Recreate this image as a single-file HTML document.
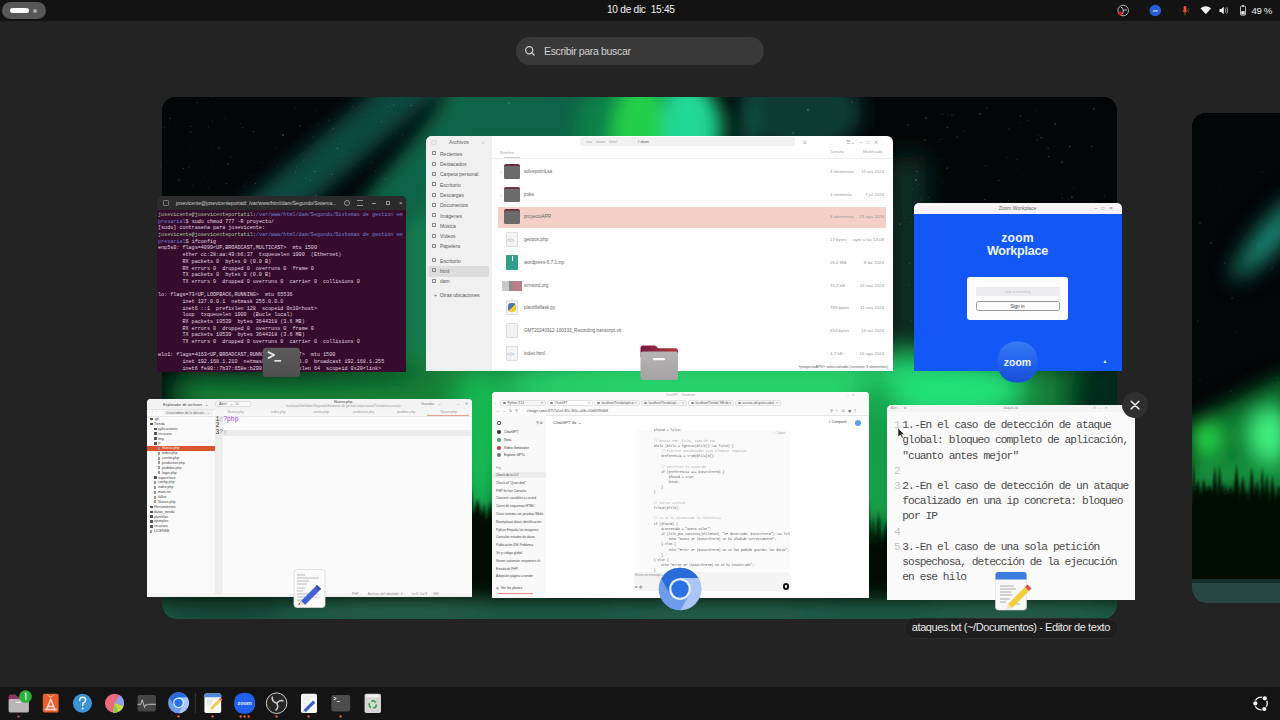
<!DOCTYPE html>
<html><head><meta charset="utf-8">
<style>
*{margin:0;padding:0;box-sizing:border-box}
html,body{width:1280px;height:720px;overflow:hidden;background:#232323;font-family:"Liberation Sans",sans-serif;position:relative}
.a{position:absolute}
#top{left:0;top:0;width:1280px;height:21px;background:#131313}
#dock{left:0;top:687px;width:1280px;height:33px;background:#141414}
.ws{overflow:hidden;border-radius:14px;background:#040806}
.win{overflow:hidden;background:#fafafa}
.mono{font-family:"Liberation Mono",monospace}
</style></head><body>
<!-- top bar -->
<div id="top" class="a">
  <div class="a" style="left:2px;top:2px;width:43.5px;height:17px;border-radius:9px;background:#575757"></div>
  <div class="a" style="left:10px;top:8px;width:19px;height:5px;border-radius:3px;background:#fafafa"></div>
  <div class="a" style="left:33px;top:9px;width:4px;height:4px;border-radius:2px;background:#a8a8a8"></div>
  <div class="a" style="left:607px;top:3.5px;font-size:10.2px;color:#f0f0f0;letter-spacing:-0.3px;white-space:nowrap">10 de dic&nbsp;&nbsp;15:45</div>
</div>
<!-- search -->
<div class="a" style="left:516px;top:37px;width:248px;height:28px;border-radius:14px;background:#393939"></div>
<div class="a" style="left:544px;top:45px;font-size:10.6px;color:#cfcfcf;letter-spacing:-0.38px;white-space:nowrap">Escribir para buscar</div>
<svg class="a" style="left:524px;top:45px" width="12" height="12" viewBox="0 0 12 12"><circle cx="5.2" cy="5.2" r="3.6" fill="none" stroke="#d0d0d0" stroke-width="1.2"/><path d="M7.8 7.8 L10 10" stroke="#d0d0d0" stroke-width="1.3" stroke-linecap="round"/></svg>

<!-- workspace 2 -->
<div id="ws2" class="a ws" style="left:1191.5px;top:112.5px;width:400px;height:490px"><svg class="a" style="left:0;top:0" width="100" height="490" viewBox="0 0 100 490">
<defs><filter id="w2b" filterUnits="userSpaceOnUse" x="-100" y="-100" width="300" height="700"><feGaussianBlur stdDeviation="10"/></filter>
<filter id="w2c" filterUnits="userSpaceOnUse" x="-100" y="-100" width="300" height="700"><feGaussianBlur stdDeviation="1.2"/></filter></defs>
<rect width="100" height="490" fill="#030607"/>
<g filter="url(#w2b)">
<ellipse cx="78" cy="122" rx="14" ry="58" fill="#136a5a" transform="rotate(40 78 122)"/>
<ellipse cx="80" cy="128" rx="9" ry="32" fill="#1b8c78" transform="rotate(40 80 128)"/>
<polygon points="0,310 100,260 100,380 0,380" fill="#0a7a30"/>
<ellipse cx="12" cy="325" rx="16" ry="16" fill="#28d848"/>
<ellipse cx="78" cy="322" rx="20" ry="26" fill="#40f080"/>
<rect x="-10" y="350" width="120" height="30" fill="#14903c"/>
</g>
<circle cx="40" cy="185" r="0.58" fill="#9aaaa8" opacity="0.53"/><circle cx="45" cy="194" r="0.36" fill="#9aaaa8" opacity="0.56"/><circle cx="55" cy="262" r="0.33" fill="#9aaaa8" opacity="0.45"/><circle cx="8" cy="267" r="0.51" fill="#9aaaa8" opacity="0.32"/><circle cx="86" cy="318" r="0.50" fill="#9aaaa8" opacity="0.61"/><circle cx="14" cy="5" r="0.46" fill="#9aaaa8" opacity="0.33"/><circle cx="17" cy="80" r="0.31" fill="#9aaaa8" opacity="0.53"/><circle cx="39" cy="278" r="0.46" fill="#9aaaa8" opacity="0.62"/><circle cx="44" cy="219" r="0.44" fill="#9aaaa8" opacity="0.44"/><circle cx="88" cy="329" r="0.55" fill="#9aaaa8" opacity="0.65"/><circle cx="28" cy="76" r="0.39" fill="#9aaaa8" opacity="0.34"/><circle cx="67" cy="132" r="0.55" fill="#9aaaa8" opacity="0.49"/><circle cx="84" cy="280" r="0.30" fill="#9aaaa8" opacity="0.40"/><circle cx="80" cy="155" r="0.59" fill="#9aaaa8" opacity="0.50"/><circle cx="6" cy="208" r="0.53" fill="#9aaaa8" opacity="0.43"/><circle cx="8" cy="110" r="0.59" fill="#9aaaa8" opacity="0.68"/><circle cx="10" cy="81" r="0.33" fill="#9aaaa8" opacity="0.33"/><circle cx="70" cy="59" r="0.47" fill="#9aaaa8" opacity="0.52"/><circle cx="17" cy="242" r="0.34" fill="#9aaaa8" opacity="0.62"/><circle cx="10" cy="139" r="0.36" fill="#9aaaa8" opacity="0.43"/><circle cx="85" cy="265" r="0.39" fill="#9aaaa8" opacity="0.74"/><circle cx="19" cy="130" r="0.56" fill="#9aaaa8" opacity="0.62"/><circle cx="9" cy="326" r="0.36" fill="#9aaaa8" opacity="0.43"/><circle cx="68" cy="109" r="0.39" fill="#9aaaa8" opacity="0.34"/><circle cx="8" cy="192" r="0.37" fill="#9aaaa8" opacity="0.60"/><circle cx="33" cy="150" r="0.59" fill="#9aaaa8" opacity="0.54"/><circle cx="51" cy="286" r="0.35" fill="#9aaaa8" opacity="0.38"/><circle cx="80" cy="270" r="0.37" fill="#9aaaa8" opacity="0.39"/><circle cx="65" cy="310" r="0.36" fill="#9aaaa8" opacity="0.78"/><circle cx="78" cy="199" r="0.43" fill="#9aaaa8" opacity="0.35"/>
<g filter="url(#w2c)"><polygon points="0.0,491.0 0.0,390.0 1.6,347.9 3.2,379.4 6.1,365.9 9.0,385.6 11.7,365.6 14.4,379.7 17.3,371.7 20.2,380.7 22.9,352.7 25.5,385.2 27.5,351.6 29.6,381.6 31.1,368.2 32.7,384.4 34.3,370.9 35.9,384.0 38.6,372.3 41.2,384.2 44.5,351.6 47.8,387.7 50.6,362.2 53.5,383.2 55.1,376.9 56.7,391.5 59.6,353.6 62.5,382.9 65.2,366.2 68.0,390.6 70.2,353.8 72.3,384.6 74.9,360.8 77.5,393.2 80.4,362.2 83.4,392.7 86.8,371.5 90.1,392.2 93.4,359.2 96.7,390.2 99.8,360.1 102.8,392.4 100.0,380.0 100.0,491.0" fill="#030904"/></g>
<rect x="0" y="468" width="100" height="25" fill="#284741"/>
<rect x="0" y="466" width="100" height="4" fill="#15302b"/>
</svg></div>
<!-- main workspace -->
<div id="ws1" class="a ws" style="left:162px;top:97px;width:955px;height:522px"><svg class="a" style="left:0;top:0" width="955" height="522" viewBox="0 0 955 522">
<defs>
<filter id="bl" filterUnits="userSpaceOnUse" x="-100" y="-100" width="1155" height="722"><feGaussianBlur stdDeviation="13"/></filter>
<filter id="bl2" filterUnits="userSpaceOnUse" x="-100" y="-100" width="1155" height="722"><feGaussianBlur stdDeviation="1.5"/></filter>
<filter id="bl3" filterUnits="userSpaceOnUse" x="-100" y="-100" width="1155" height="722"><feGaussianBlur stdDeviation="9"/></filter>
</defs>
<rect width="955" height="522" fill="#030607"/>
<g filter="url(#bl)">



<rect x="290" y="-20" width="80" height="70" fill="#128050"/>
<rect x="378" y="-20" width="60" height="70" fill="#0a5030"/>
<rect x="230" y="100" width="60" height="200" fill="#127a50"/>
<rect x="728" y="60" width="35" height="230" fill="#0a3026"/>
<ellipse cx="500" cy="298" rx="520" ry="48" fill="#128238"/>
<ellipse cx="120" cy="276" rx="150" ry="10" fill="#06251a"/>
<ellipse cx="590" cy="290" rx="250" ry="34" fill="#26d06a"/>
<ellipse cx="790" cy="292" rx="70" ry="32" fill="#24e078"/>
<ellipse cx="990" cy="300" rx="90" ry="45" fill="#062a1c"/>
<ellipse cx="-10" cy="290" rx="30" ry="40" fill="#040a08"/>
<ellipse cx="318" cy="350" rx="30" ry="80" fill="#17b853"/>
<ellipse cx="715" cy="390" rx="32" ry="110" fill="#13a04a"/>
<rect x="-50" y="430" width="1100" height="120" fill="#040806"/>
</g>
<g filter="url(#bl3)">
<polygon points="68,118 135,118 290,-15 222,-15" fill="#0c4a40"/>
<polygon points="188,118 440,118 440,-15 298,-15" fill="#0d6446"/>
<polygon points="260,115 440,115 440,50 310,50" fill="#12834f"/>
<ellipse cx="490" cy="30" rx="75" ry="55" fill="#10804a"/>
<ellipse cx="640" cy="15" rx="60" ry="40" fill="#0a3a30"/>
<ellipse cx="478" cy="40" rx="28" ry="55" fill="#22d048"/>
<ellipse cx="527" cy="35" rx="26" ry="55" fill="#20d898"/>
<ellipse cx="586" cy="25" rx="7" ry="40" fill="#0e5a48"/>
</g>
<circle cx="69" cy="134" r="0.50" fill="#9aaaa8" opacity="0.38"/><circle cx="485" cy="9" r="0.52" fill="#9aaaa8" opacity="0.38"/><circle cx="87" cy="106" r="0.68" fill="#9aaaa8" opacity="0.41"/><circle cx="213" cy="157" r="0.58" fill="#9aaaa8" opacity="0.55"/><circle cx="932" cy="12" r="0.69" fill="#9aaaa8" opacity="0.49"/><circle cx="138" cy="29" r="0.47" fill="#9aaaa8" opacity="0.76"/><circle cx="57" cy="51" r="0.62" fill="#9aaaa8" opacity="0.56"/><circle cx="836" cy="182" r="0.47" fill="#9aaaa8" opacity="0.84"/><circle cx="113" cy="105" r="0.65" fill="#9aaaa8" opacity="0.43"/><circle cx="467" cy="10" r="0.62" fill="#9aaaa8" opacity="0.73"/><circle cx="436" cy="210" r="0.54" fill="#9aaaa8" opacity="0.68"/><circle cx="58" cy="175" r="0.61" fill="#9aaaa8" opacity="0.85"/><circle cx="785" cy="71" r="0.50" fill="#9aaaa8" opacity="0.68"/><circle cx="22" cy="115" r="0.42" fill="#9aaaa8" opacity="0.41"/><circle cx="56" cy="192" r="0.40" fill="#9aaaa8" opacity="0.47"/><circle cx="429" cy="137" r="0.68" fill="#9aaaa8" opacity="0.78"/><circle cx="844" cy="239" r="0.41" fill="#9aaaa8" opacity="0.44"/><circle cx="910" cy="173" r="0.56" fill="#9aaaa8" opacity="0.66"/><circle cx="646" cy="13" r="0.71" fill="#9aaaa8" opacity="0.74"/><circle cx="835" cy="199" r="0.51" fill="#9aaaa8" opacity="0.55"/><circle cx="99" cy="159" r="0.37" fill="#9aaaa8" opacity="0.38"/><circle cx="50" cy="0" r="0.41" fill="#9aaaa8" opacity="0.40"/><circle cx="347" cy="6" r="0.70" fill="#9aaaa8" opacity="0.66"/><circle cx="142" cy="63" r="0.49" fill="#9aaaa8" opacity="0.53"/><circle cx="117" cy="212" r="0.75" fill="#9aaaa8" opacity="0.58"/><circle cx="327" cy="66" r="0.41" fill="#9aaaa8" opacity="0.36"/><circle cx="908" cy="132" r="0.41" fill="#9aaaa8" opacity="0.62"/><circle cx="26" cy="132" r="0.74" fill="#9aaaa8" opacity="0.78"/><circle cx="160" cy="193" r="0.56" fill="#9aaaa8" opacity="0.74"/><circle cx="315" cy="56" r="0.74" fill="#9aaaa8" opacity="0.78"/><circle cx="770" cy="205" r="0.65" fill="#9aaaa8" opacity="0.46"/><circle cx="27" cy="70" r="0.45" fill="#9aaaa8" opacity="0.70"/><circle cx="913" cy="112" r="0.72" fill="#9aaaa8" opacity="0.84"/><circle cx="912" cy="91" r="0.44" fill="#9aaaa8" opacity="0.46"/><circle cx="860" cy="210" r="0.54" fill="#9aaaa8" opacity="0.68"/><circle cx="764" cy="21" r="0.61" fill="#9aaaa8" opacity="0.80"/><circle cx="747" cy="188" r="0.54" fill="#9aaaa8" opacity="0.44"/><circle cx="754" cy="83" r="0.67" fill="#9aaaa8" opacity="0.84"/><circle cx="378" cy="100" r="0.64" fill="#9aaaa8" opacity="0.44"/><circle cx="121" cy="38" r="0.71" fill="#9aaaa8" opacity="0.75"/><circle cx="140" cy="207" r="0.74" fill="#9aaaa8" opacity="0.68"/><circle cx="14" cy="243" r="0.61" fill="#9aaaa8" opacity="0.61"/><circle cx="892" cy="108" r="0.70" fill="#9aaaa8" opacity="0.76"/><circle cx="400" cy="33" r="0.49" fill="#9aaaa8" opacity="0.58"/><circle cx="876" cy="125" r="0.56" fill="#9aaaa8" opacity="0.61"/><circle cx="18" cy="110" r="0.42" fill="#9aaaa8" opacity="0.35"/><circle cx="763" cy="43" r="0.54" fill="#9aaaa8" opacity="0.71"/><circle cx="738" cy="127" r="0.57" fill="#9aaaa8" opacity="0.73"/><circle cx="871" cy="111" r="0.60" fill="#9aaaa8" opacity="0.60"/><circle cx="509" cy="120" r="0.63" fill="#9aaaa8" opacity="0.79"/><circle cx="900" cy="65" r="0.57" fill="#9aaaa8" opacity="0.82"/><circle cx="802" cy="34" r="0.40" fill="#9aaaa8" opacity="0.57"/><circle cx="69" cy="60" r="0.38" fill="#9aaaa8" opacity="0.68"/><circle cx="749" cy="224" r="0.41" fill="#9aaaa8" opacity="0.71"/><circle cx="631" cy="36" r="0.74" fill="#9aaaa8" opacity="0.46"/><circle cx="910" cy="100" r="0.54" fill="#9aaaa8" opacity="0.84"/><circle cx="795" cy="40" r="0.52" fill="#9aaaa8" opacity="0.61"/><circle cx="690" cy="5" r="0.57" fill="#9aaaa8" opacity="0.57"/><circle cx="17" cy="83" r="0.60" fill="#9aaaa8" opacity="0.61"/><circle cx="61" cy="246" r="0.67" fill="#9aaaa8" opacity="0.84"/><circle cx="100" cy="66" r="0.37" fill="#9aaaa8" opacity="0.74"/><circle cx="870" cy="205" r="0.45" fill="#9aaaa8" opacity="0.42"/><circle cx="878" cy="143" r="0.63" fill="#9aaaa8" opacity="0.39"/><circle cx="55" cy="172" r="0.52" fill="#9aaaa8" opacity="0.39"/><circle cx="896" cy="159" r="0.67" fill="#9aaaa8" opacity="0.39"/><circle cx="818" cy="17" r="0.70" fill="#9aaaa8" opacity="0.58"/><circle cx="324" cy="138" r="0.46" fill="#9aaaa8" opacity="0.41"/><circle cx="154" cy="13" r="0.43" fill="#9aaaa8" opacity="0.51"/><circle cx="17" cy="63" r="0.36" fill="#9aaaa8" opacity="0.72"/><circle cx="893" cy="27" r="0.68" fill="#9aaaa8" opacity="0.57"/><circle cx="484" cy="172" r="0.49" fill="#9aaaa8" opacity="0.77"/><circle cx="332" cy="14" r="0.40" fill="#9aaaa8" opacity="0.39"/><circle cx="81" cy="210" r="0.70" fill="#9aaaa8" opacity="0.69"/>
<circle cx="775.5" cy="141.1" r="0.49" fill="#8fa0a0" opacity="0.47"/><circle cx="786.4" cy="160.6" r="0.54" fill="#8fa0a0" opacity="0.48"/><circle cx="848.6" cy="54.9" r="0.30" fill="#8fa0a0" opacity="0.42"/><circle cx="865.9" cy="23.2" r="0.54" fill="#8fa0a0" opacity="0.35"/><circle cx="790.0" cy="18.0" r="0.60" fill="#8fa0a0" opacity="0.58"/><circle cx="928.1" cy="127.0" r="0.31" fill="#8fa0a0" opacity="0.40"/><circle cx="847.0" cy="32.0" r="0.59" fill="#8fa0a0" opacity="0.42"/><circle cx="773.3" cy="165.3" r="0.34" fill="#8fa0a0" opacity="0.67"/><circle cx="837.4" cy="114.9" r="0.40" fill="#8fa0a0" opacity="0.47"/><circle cx="780.2" cy="17.1" r="0.56" fill="#8fa0a0" opacity="0.36"/><circle cx="907.8" cy="49.6" r="0.59" fill="#8fa0a0" opacity="0.65"/><circle cx="902.3" cy="154.9" r="0.47" fill="#8fa0a0" opacity="0.58"/><circle cx="766.3" cy="100.5" r="0.55" fill="#8fa0a0" opacity="0.34"/><circle cx="938.5" cy="178.6" r="0.42" fill="#8fa0a0" opacity="0.41"/><circle cx="837.0" cy="83.3" r="0.60" fill="#8fa0a0" opacity="0.42"/><circle cx="745.8" cy="27.7" r="0.52" fill="#8fa0a0" opacity="0.70"/><circle cx="846.6" cy="103.4" r="0.47" fill="#8fa0a0" opacity="0.59"/><circle cx="787.7" cy="125.7" r="0.47" fill="#8fa0a0" opacity="0.53"/><circle cx="778.8" cy="42.3" r="0.40" fill="#8fa0a0" opacity="0.67"/><circle cx="814.5" cy="123.5" r="0.39" fill="#8fa0a0" opacity="0.30"/><circle cx="754.1" cy="164.6" r="0.53" fill="#8fa0a0" opacity="0.42"/><circle cx="886.9" cy="138.4" r="0.57" fill="#8fa0a0" opacity="0.68"/><circle cx="827.5" cy="197.9" r="0.59" fill="#8fa0a0" opacity="0.52"/><circle cx="929.9" cy="103.3" r="0.41" fill="#8fa0a0" opacity="0.36"/><circle cx="928.4" cy="40.8" r="0.32" fill="#8fa0a0" opacity="0.61"/><circle cx="906.4" cy="101.8" r="0.55" fill="#8fa0a0" opacity="0.27"/><circle cx="795.5" cy="65.1" r="0.43" fill="#8fa0a0" opacity="0.33"/><circle cx="754.9" cy="74.2" r="0.57" fill="#8fa0a0" opacity="0.69"/><circle cx="900.4" cy="101.0" r="0.38" fill="#8fa0a0" opacity="0.68"/><circle cx="853.0" cy="148.4" r="0.31" fill="#8fa0a0" opacity="0.35"/><circle cx="920.2" cy="161.1" r="0.56" fill="#8fa0a0" opacity="0.52"/><circle cx="831.6" cy="120.4" r="0.55" fill="#8fa0a0" opacity="0.39"/><circle cx="854.9" cy="62.4" r="0.53" fill="#8fa0a0" opacity="0.25"/><circle cx="887.3" cy="191.3" r="0.31" fill="#8fa0a0" opacity="0.52"/><circle cx="878.4" cy="171.8" r="0.48" fill="#8fa0a0" opacity="0.37"/><circle cx="827.2" cy="192.2" r="0.57" fill="#8fa0a0" opacity="0.31"/><circle cx="760.4" cy="27.8" r="0.31" fill="#8fa0a0" opacity="0.45"/><circle cx="770.3" cy="174.8" r="0.50" fill="#8fa0a0" opacity="0.31"/><circle cx="855.8" cy="71.6" r="0.45" fill="#8fa0a0" opacity="0.35"/><circle cx="775.7" cy="44.9" r="0.41" fill="#8fa0a0" opacity="0.57"/><circle cx="858.3" cy="18.8" r="0.51" fill="#8fa0a0" opacity="0.64"/><circle cx="906.5" cy="160.2" r="0.30" fill="#8fa0a0" opacity="0.46"/><circle cx="753.7" cy="155.1" r="0.35" fill="#8fa0a0" opacity="0.57"/><circle cx="794.4" cy="142.4" r="0.39" fill="#8fa0a0" opacity="0.27"/><circle cx="823.6" cy="68.8" r="0.57" fill="#8fa0a0" opacity="0.38"/><circle cx="848.2" cy="114.4" r="0.58" fill="#8fa0a0" opacity="0.29"/><circle cx="869.3" cy="106.6" r="0.52" fill="#8fa0a0" opacity="0.69"/><circle cx="806.7" cy="142.9" r="0.46" fill="#8fa0a0" opacity="0.50"/><circle cx="753.7" cy="164.8" r="0.59" fill="#8fa0a0" opacity="0.41"/><circle cx="808.4" cy="198.7" r="0.33" fill="#8fa0a0" opacity="0.28"/><circle cx="755.8" cy="164.7" r="0.53" fill="#8fa0a0" opacity="0.45"/><circle cx="873.6" cy="13.8" r="0.49" fill="#8fa0a0" opacity="0.45"/><circle cx="851.2" cy="84.0" r="0.42" fill="#8fa0a0" opacity="0.35"/><circle cx="750.5" cy="92.4" r="0.37" fill="#8fa0a0" opacity="0.57"/><circle cx="915.7" cy="147.5" r="0.44" fill="#8fa0a0" opacity="0.36"/><circle cx="822.9" cy="102.5" r="0.49" fill="#8fa0a0" opacity="0.68"/><circle cx="758.4" cy="101.1" r="0.45" fill="#8fa0a0" opacity="0.57"/><circle cx="931.5" cy="158.1" r="0.49" fill="#8fa0a0" opacity="0.59"/><circle cx="883.6" cy="173.2" r="0.51" fill="#8fa0a0" opacity="0.56"/><circle cx="792.7" cy="184.2" r="0.42" fill="#8fa0a0" opacity="0.53"/><circle cx="917.3" cy="193.1" r="0.60" fill="#8fa0a0" opacity="0.25"/><circle cx="807.2" cy="69.2" r="0.42" fill="#8fa0a0" opacity="0.32"/><circle cx="858.9" cy="25.1" r="0.39" fill="#8fa0a0" opacity="0.67"/><circle cx="899.6" cy="97.8" r="0.33" fill="#8fa0a0" opacity="0.68"/><circle cx="891.3" cy="49.1" r="0.40" fill="#8fa0a0" opacity="0.54"/><circle cx="886.6" cy="59.6" r="0.59" fill="#8fa0a0" opacity="0.39"/><circle cx="794.7" cy="170.6" r="0.35" fill="#8fa0a0" opacity="0.56"/><circle cx="783.0" cy="123.6" r="0.38" fill="#8fa0a0" opacity="0.42"/><circle cx="942.3" cy="98.7" r="0.43" fill="#8fa0a0" opacity="0.53"/><circle cx="800.3" cy="43.1" r="0.42" fill="#8fa0a0" opacity="0.37"/><circle cx="780.5" cy="192.5" r="0.31" fill="#8fa0a0" opacity="0.61"/><circle cx="941.0" cy="143.9" r="0.31" fill="#8fa0a0" opacity="0.48"/><circle cx="748.4" cy="125.5" r="0.51" fill="#8fa0a0" opacity="0.36"/><circle cx="741.6" cy="113.4" r="0.33" fill="#8fa0a0" opacity="0.39"/><circle cx="837.6" cy="179.9" r="0.41" fill="#8fa0a0" opacity="0.31"/><circle cx="910.2" cy="166.2" r="0.46" fill="#8fa0a0" opacity="0.27"/><circle cx="780.3" cy="86.6" r="0.47" fill="#8fa0a0" opacity="0.35"/><circle cx="912.5" cy="170.3" r="0.58" fill="#8fa0a0" opacity="0.65"/><circle cx="743.8" cy="120.6" r="0.32" fill="#8fa0a0" opacity="0.65"/><circle cx="900.6" cy="154.3" r="0.36" fill="#8fa0a0" opacity="0.28"/><circle cx="915.3" cy="125.2" r="0.49" fill="#8fa0a0" opacity="0.46"/><circle cx="912.0" cy="74.2" r="0.38" fill="#8fa0a0" opacity="0.41"/><circle cx="804.1" cy="129.2" r="0.57" fill="#8fa0a0" opacity="0.28"/><circle cx="754.5" cy="107.2" r="0.50" fill="#8fa0a0" opacity="0.34"/><circle cx="798.0" cy="21.2" r="0.31" fill="#8fa0a0" opacity="0.47"/><circle cx="886.4" cy="134.1" r="0.35" fill="#8fa0a0" opacity="0.30"/><circle cx="940.1" cy="112.3" r="0.42" fill="#8fa0a0" opacity="0.56"/><circle cx="896.5" cy="109.7" r="0.32" fill="#8fa0a0" opacity="0.62"/><circle cx="785.9" cy="17.7" r="0.41" fill="#8fa0a0" opacity="0.49"/><circle cx="875.1" cy="43.1" r="0.51" fill="#8fa0a0" opacity="0.47"/><circle cx="774.8" cy="171.7" r="0.54" fill="#8fa0a0" opacity="0.66"/><circle cx="886.1" cy="51.3" r="0.53" fill="#8fa0a0" opacity="0.66"/><circle cx="854.6" cy="182.6" r="0.59" fill="#8fa0a0" opacity="0.43"/><circle cx="942.5" cy="188.0" r="0.54" fill="#8fa0a0" opacity="0.26"/><circle cx="815.7" cy="126.6" r="0.48" fill="#8fa0a0" opacity="0.59"/><circle cx="879.1" cy="40.7" r="0.58" fill="#8fa0a0" opacity="0.49"/><circle cx="929.6" cy="49.3" r="0.60" fill="#8fa0a0" opacity="0.50"/><circle cx="906.7" cy="150.6" r="0.56" fill="#8fa0a0" opacity="0.41"/><circle cx="757.8" cy="87.1" r="0.35" fill="#8fa0a0" opacity="0.49"/><circle cx="915.2" cy="78.8" r="0.34" fill="#8fa0a0" opacity="0.26"/><circle cx="830.9" cy="120.3" r="0.31" fill="#8fa0a0" opacity="0.55"/><circle cx="785.3" cy="30.3" r="0.58" fill="#8fa0a0" opacity="0.49"/><circle cx="932.4" cy="107.6" r="0.34" fill="#8fa0a0" opacity="0.36"/><circle cx="831.2" cy="131.8" r="0.53" fill="#8fa0a0" opacity="0.59"/><circle cx="879.9" cy="58.1" r="0.43" fill="#8fa0a0" opacity="0.42"/><circle cx="845.3" cy="60.4" r="0.46" fill="#8fa0a0" opacity="0.46"/><circle cx="747.6" cy="166.4" r="0.48" fill="#8fa0a0" opacity="0.61"/><circle cx="898.4" cy="148.9" r="0.60" fill="#8fa0a0" opacity="0.42"/><circle cx="824.6" cy="10.7" r="0.50" fill="#8fa0a0" opacity="0.51"/><circle cx="863.9" cy="199.6" r="0.36" fill="#8fa0a0" opacity="0.35"/><circle cx="897.8" cy="164.4" r="0.44" fill="#8fa0a0" opacity="0.27"/><circle cx="819.6" cy="167.0" r="0.45" fill="#8fa0a0" opacity="0.46"/><circle cx="823.7" cy="129.4" r="0.48" fill="#8fa0a0" opacity="0.56"/><circle cx="926.0" cy="152.7" r="0.41" fill="#8fa0a0" opacity="0.36"/><circle cx="908.1" cy="160.7" r="0.58" fill="#8fa0a0" opacity="0.34"/><circle cx="922.3" cy="179.2" r="0.32" fill="#8fa0a0" opacity="0.39"/><circle cx="876.2" cy="37.8" r="0.55" fill="#8fa0a0" opacity="0.37"/><circle cx="886.7" cy="66.2" r="0.37" fill="#8fa0a0" opacity="0.34"/><circle cx="847.0" cy="145.5" r="0.37" fill="#8fa0a0" opacity="0.56"/><circle cx="812.0" cy="133.4" r="0.41" fill="#8fa0a0" opacity="0.34"/><circle cx="35.3" cy="5.8" r="0.51" fill="#8fa0a0" opacity="0.44"/><circle cx="30.8" cy="88.1" r="0.50" fill="#8fa0a0" opacity="0.26"/><circle cx="181.2" cy="59.5" r="0.43" fill="#8fa0a0" opacity="0.48"/><circle cx="240.6" cy="37.4" r="0.49" fill="#8fa0a0" opacity="0.54"/><circle cx="91.4" cy="34.6" r="0.53" fill="#8fa0a0" opacity="0.54"/><circle cx="114.2" cy="51.4" r="0.37" fill="#8fa0a0" opacity="0.61"/><circle cx="5.0" cy="64.3" r="0.44" fill="#8fa0a0" opacity="0.35"/><circle cx="146.7" cy="58.3" r="0.33" fill="#8fa0a0" opacity="0.47"/><circle cx="41.3" cy="79.9" r="0.40" fill="#8fa0a0" opacity="0.40"/><circle cx="53.8" cy="4.8" r="0.36" fill="#8fa0a0" opacity="0.32"/><circle cx="156.0" cy="84.7" r="0.37" fill="#8fa0a0" opacity="0.30"/><circle cx="133.6" cy="11.6" r="0.42" fill="#8fa0a0" opacity="0.59"/><circle cx="50.8" cy="70.0" r="0.46" fill="#8fa0a0" opacity="0.29"/><circle cx="60.6" cy="59.9" r="0.33" fill="#8fa0a0" opacity="0.34"/><circle cx="144.2" cy="81.8" r="0.46" fill="#8fa0a0" opacity="0.55"/><circle cx="2.3" cy="30.3" r="0.40" fill="#8fa0a0" opacity="0.66"/><circle cx="89.4" cy="78.5" r="0.31" fill="#8fa0a0" opacity="0.47"/><circle cx="222.9" cy="77.1" r="0.47" fill="#8fa0a0" opacity="0.33"/><circle cx="231.6" cy="8.0" r="0.59" fill="#8fa0a0" opacity="0.60"/><circle cx="179.9" cy="53.1" r="0.35" fill="#8fa0a0" opacity="0.40"/><circle cx="166.0" cy="65.6" r="0.42" fill="#8fa0a0" opacity="0.61"/><circle cx="13.4" cy="28.7" r="0.33" fill="#8fa0a0" opacity="0.40"/><circle cx="198.2" cy="75.3" r="0.34" fill="#8fa0a0" opacity="0.39"/><circle cx="28.0" cy="66.2" r="0.43" fill="#8fa0a0" opacity="0.35"/><circle cx="93.5" cy="86.5" r="0.43" fill="#8fa0a0" opacity="0.56"/><circle cx="156.9" cy="47.4" r="0.47" fill="#8fa0a0" opacity="0.41"/><circle cx="49.6" cy="49.4" r="0.39" fill="#8fa0a0" opacity="0.40"/><circle cx="46.6" cy="91.3" r="0.43" fill="#8fa0a0" opacity="0.34"/><circle cx="7.9" cy="21.4" r="0.56" fill="#8fa0a0" opacity="0.40"/><circle cx="166.8" cy="23.1" r="0.50" fill="#8fa0a0" opacity="0.45"/><circle cx="184.1" cy="52.8" r="0.41" fill="#8fa0a0" opacity="0.38"/><circle cx="148.6" cy="83.2" r="0.51" fill="#8fa0a0" opacity="0.47"/><circle cx="82.1" cy="89.1" r="0.55" fill="#8fa0a0" opacity="0.32"/><circle cx="169.8" cy="77.2" r="0.50" fill="#8fa0a0" opacity="0.68"/><circle cx="219.8" cy="24.6" r="0.60" fill="#8fa0a0" opacity="0.40"/><circle cx="95.0" cy="97.6" r="0.35" fill="#8fa0a0" opacity="0.43"/><circle cx="156.5" cy="27.3" r="0.38" fill="#8fa0a0" opacity="0.61"/><circle cx="153.1" cy="74.4" r="0.54" fill="#8fa0a0" opacity="0.64"/><circle cx="223.4" cy="82.3" r="0.59" fill="#8fa0a0" opacity="0.47"/><circle cx="175.4" cy="51.4" r="0.59" fill="#8fa0a0" opacity="0.54"/><circle cx="107.6" cy="66.4" r="0.39" fill="#8fa0a0" opacity="0.31"/><circle cx="96.6" cy="13.7" r="0.30" fill="#8fa0a0" opacity="0.29"/><circle cx="113.6" cy="76.3" r="0.31" fill="#8fa0a0" opacity="0.54"/><circle cx="27.8" cy="51.0" r="0.39" fill="#8fa0a0" opacity="0.45"/><circle cx="178.0" cy="41.3" r="0.42" fill="#8fa0a0" opacity="0.58"/><circle cx="29.0" cy="34.9" r="0.51" fill="#8fa0a0" opacity="0.63"/><circle cx="244.9" cy="25.7" r="0.49" fill="#8fa0a0" opacity="0.39"/><circle cx="175.5" cy="84.6" r="0.34" fill="#8fa0a0" opacity="0.41"/><circle cx="234.1" cy="35.2" r="0.49" fill="#8fa0a0" opacity="0.62"/><circle cx="69.7" cy="78.3" r="0.30" fill="#8fa0a0" opacity="0.40"/><circle cx="41.7" cy="34.6" r="0.36" fill="#8fa0a0" opacity="0.26"/><circle cx="200.8" cy="17.3" r="0.47" fill="#8fa0a0" opacity="0.50"/><circle cx="212.4" cy="84.7" r="0.49" fill="#8fa0a0" opacity="0.33"/><circle cx="190.2" cy="9.8" r="0.58" fill="#8fa0a0" opacity="0.39"/><circle cx="63.2" cy="21.7" r="0.42" fill="#8fa0a0" opacity="0.61"/><circle cx="213.7" cy="74.6" r="0.52" fill="#8fa0a0" opacity="0.36"/><circle cx="80.3" cy="30.4" r="0.43" fill="#8fa0a0" opacity="0.64"/><circle cx="249.0" cy="8.4" r="0.59" fill="#8fa0a0" opacity="0.66"/><circle cx="115.2" cy="69.3" r="0.54" fill="#8fa0a0" opacity="0.33"/><circle cx="154.0" cy="98.2" r="0.56" fill="#8fa0a0" opacity="0.66"/><circle cx="21.2" cy="71.5" r="0.45" fill="#8fa0a0" opacity="0.66"/><circle cx="41.7" cy="54.9" r="0.34" fill="#8fa0a0" opacity="0.61"/><circle cx="180.6" cy="3.1" r="0.39" fill="#8fa0a0" opacity="0.31"/><circle cx="158.9" cy="63.0" r="0.32" fill="#8fa0a0" opacity="0.68"/><circle cx="241.3" cy="44.1" r="0.47" fill="#8fa0a0" opacity="0.41"/><circle cx="151.5" cy="39.8" r="0.43" fill="#8fa0a0" opacity="0.59"/><circle cx="46.6" cy="29.8" r="0.53" fill="#8fa0a0" opacity="0.35"/><circle cx="17.2" cy="91.2" r="0.35" fill="#8fa0a0" opacity="0.43"/><circle cx="78.4" cy="26.2" r="0.41" fill="#8fa0a0" opacity="0.49"/><circle cx="29.0" cy="53.3" r="0.32" fill="#8fa0a0" opacity="0.29"/><circle cx="50.5" cy="24.0" r="0.40" fill="#8fa0a0" opacity="0.38"/><circle cx="209.2" cy="65.8" r="0.44" fill="#8fa0a0" opacity="0.60"/><circle cx="171.5" cy="31.5" r="0.48" fill="#8fa0a0" opacity="0.59"/><circle cx="133.6" cy="75.3" r="0.49" fill="#8fa0a0" opacity="0.67"/><circle cx="66.0" cy="67.2" r="0.59" fill="#8fa0a0" opacity="0.49"/><circle cx="226.3" cy="9.5" r="0.52" fill="#8fa0a0" opacity="0.37"/><circle cx="187.6" cy="42.3" r="0.46" fill="#8fa0a0" opacity="0.36"/><circle cx="64.3" cy="86.5" r="0.49" fill="#8fa0a0" opacity="0.53"/><circle cx="28.9" cy="29.3" r="0.59" fill="#8fa0a0" opacity="0.34"/><circle cx="134.5" cy="69.7" r="0.45" fill="#8fa0a0" opacity="0.50"/><g filter="url(#bl2)"><polygon points="0.0,522.0 0.0,415.0 2.8,381.1 5.6,420.5 8.3,381.0 11.0,418.6 13.0,398.6 15.1,420.0 17.7,373.3 20.3,415.9 23.5,386.1 26.7,417.3 30.4,394.1 34.2,421.6 38.3,383.6 42.5,418.3 47.4,405.5 52.4,421.4 54.5,384.9 56.6,421.3 60.8,357.5 65.0,420.0 69.5,385.9 74.0,420.8 78.7,389.5 83.4,417.3 85.5,406.0 87.6,416.0 92.1,393.2 96.6,421.3 100.6,360.4 104.7,422.5 108.2,393.9 111.7,415.7 115.9,380.8 120.1,422.3 122.7,387.8 125.4,419.9 128.5,395.6 131.7,422.7 135.5,372.0 139.4,417.5 143.6,400.9 147.8,415.1 150.0,401.9 152.2,421.9 156.2,401.3 160.2,419.6 163.6,406.4 167.0,417.0 172.0,355.4 176.9,423.2 181.8,396.5 186.7,417.1 191.5,403.7 196.4,416.4 200.0,345.9 203.5,420.1 208.2,388.9 212.9,424.0 216.3,382.0 219.8,419.5 222.7,405.8 225.6,418.2 230.1,409.9 234.6,423.4 237.0,382.2 239.3,424.0 242.2,398.8 245.1,425.0 248.8,399.2 252.6,417.8 254.8,406.9 256.9,417.9 261.7,402.5 266.5,420.1 269.1,398.8 271.7,423.8 276.1,391.1 280.5,424.4 284.2,355.1 287.8,419.5 292.1,390.7 296.3,415.5 301.1,406.2 305.9,418.4 308.8,387.8 311.7,417.6 315.7,401.0 319.6,418.9 322.1,405.2 324.6,424.1 328.1,403.4 331.6,425.0 335.0,388.5 338.3,418.4 340.6,402.8 342.9,420.7 347.5,387.8 352.2,419.4 355.8,399.9 359.3,416.8 362.2,355.3 365.0,423.2 369.6,406.0 374.2,420.0 377.4,400.0 380.6,426.9 385.2,380.7 389.8,428.0 393.2,372.6 396.6,429.2 401.1,390.0 405.6,423.1 407.9,411.9 410.3,428.4 415.1,395.4 419.9,429.7 423.3,366.9 426.6,425.3 431.4,399.3 436.2,424.9 438.9,400.5 441.7,425.7 443.9,404.4 446.1,429.0 448.8,380.0 451.4,430.2 456.3,401.8 461.2,430.9 463.9,414.7 466.6,434.2 469.5,422.0 472.4,434.4 475.7,415.5 479.0,437.5 481.6,422.9 484.3,433.1 488.4,418.5 492.4,436.8 495.9,419.1 499.4,433.4 503.9,419.0 508.4,438.5 511.3,398.3 514.1,433.7 516.8,414.9 519.5,441.9 521.9,416.1 524.4,442.7 526.8,402.0 529.2,442.4 533.9,406.9 538.5,443.2 541.5,424.3 544.5,442.3 546.6,410.5 548.7,439.2 551.7,403.8 554.7,439.4 559.5,427.8 564.4,438.5 567.5,407.8 570.5,441.8 572.7,418.9 574.8,447.2 577.4,422.6 580.0,438.8 583.2,409.6 586.5,439.4 588.6,432.8 590.7,442.2 594.9,408.1 599.2,442.8 604.0,417.4 608.9,448.1 611.8,398.1 614.8,454.4 618.7,391.3 622.6,450.2 627.5,412.1 632.3,448.2 635.6,426.2 638.9,447.8 643.3,419.0 647.7,453.9 651.6,431.6 655.4,450.1 659.7,405.5 664.1,449.1 666.3,440.9 668.5,450.2 673.4,415.5 678.3,449.7 680.6,439.5 682.8,454.4 686.2,435.5 689.5,453.7 693.6,420.2 697.6,454.3 699.9,417.7 702.3,453.6 705.4,399.7 708.5,450.5 711.0,416.7 713.5,451.5 716.6,413.6 719.8,450.7 724.3,424.0 728.7,449.6 732.1,419.3 735.5,458.0 737.7,415.5 739.8,458.8 743.5,416.3 747.3,457.9 750.6,436.6 754.0,458.9 756.3,426.7 758.6,451.8 761.7,440.5 764.8,452.3 768.6,425.4 772.4,450.1 775.4,402.0 778.4,452.2 782.8,411.4 787.1,454.3 790.8,407.3 794.4,457.6 797.7,437.3 800.9,460.4 803.8,429.0 806.8,455.2 811.4,416.3 816.0,453.2 820.2,402.8 824.3,455.7 828.8,434.5 833.3,456.3 835.7,446.6 838.2,458.4 843.0,444.5 847.7,455.9 851.2,443.1 854.7,457.6 859.5,444.4 864.3,460.7 869.2,403.4 874.1,462.7 877.5,446.6 881.0,457.1 885.7,429.8 890.4,455.0 894.8,442.0 899.1,462.2 903.6,443.5 908.1,458.0 911.6,416.6 915.2,461.5 919.9,448.2 924.6,462.0 926.7,394.6 928.8,460.2 932.7,440.7 936.6,460.7 939.8,430.3 943.1,459.5 945.2,431.7 947.3,457.6 951.6,427.0 955.8,457.2 955.0,440.0 955.0,522.0" fill="#030805"/></g>
<g filter="url(#bl3)"><rect x="-20" y="502" width="1000" height="40" fill="#1f5745"/>
<ellipse cx="240" cy="508" rx="90" ry="4" fill="#336f5a"/>
<ellipse cx="560" cy="512" rx="120" ry="4" fill="#2c6652"/>
<ellipse cx="850" cy="510" rx="90" ry="4" fill="#2e6a55"/>
<ellipse cx="60" cy="515" rx="60" ry="8" fill="#163e30"/>
</g>
</svg></div>


<!-- terminal -->
<div class="a win" style="left:157px;top:196px;width:249px;height:176px;background:#360c2c;border-radius:5px 5px 0 0">
  <div class="a" style="left:0;top:0;width:249px;height:14px;background:#2b2b2b"></div>
  <div class="a" style="left:6px;top:4px;width:6px;height:6px;border:1px solid #777;border-radius:1px"></div>
  <div class="a" style="left:19px;top:3.5px;font-size:5px;color:#cfcfcf;white-space:nowrap">josevicente@josevicenteportatil: /var/www/html/dam/Segundo/Sistema...</div>
  <div class="a" style="left:187px;top:4px;width:6px;height:6px;border:1px solid #999;border-radius:3px"></div>
  <div class="a" style="left:200px;top:4px;width:6px;height:6px;border-top:1px solid #999;border-bottom:1px solid #999"></div>
  <div class="a" style="left:215px;top:7px;width:4px;height:1px;background:#999"></div>
  <div class="a" style="left:229px;top:5px;width:4px;height:4px;border:1px solid #999"></div>
  <div class="a" style="left:242px;top:4px;font-size:6px;color:#bbb">×</div>
  <pre class="a mono" style="left:1px;top:16px;font-size:5.1px;line-height:6.69px;color:#e4d8e2;white-space:pre"><span style="color:#a4c8a0">josevicente@josevicenteportatil</span>:<span style="color:#7080d0">/var/www/html/dam/Segundo/Sistemas de gestión em
presarial</span>$ sudo chmod 777 -R proyecto/
[sudo] contraseña para josevicente:
<span style="color:#a4c8a0">josevicente@josevicenteportatil</span>:<span style="color:#7080d0">/var/www/html/dam/Segundo/Sistemas de gestión em
presarial</span>$ ifconfig
enp5s0: flags=4099&lt;UP,BROADCAST,MULTICAST&gt;  mtu 1500
        ether cc:28:aa:49:b6:37  txqueuelen 1000  (Ethernet)
        RX packets 0  bytes 0 (0.0 B)
        RX errors 0  dropped 0  overruns 0  frame 0
        TX packets 0  bytes 0 (0.0 B)
        TX errors 0  dropped 0 overruns 0  carrier 0  collisions 0

lo: flags=73&lt;UP,LOOPBACK,RUNNING&gt;  mtu 65536
        inet 127.0.0.1  netmask 255.0.0.0
        inet6 ::1  prefixlen 128  scopeid 0x10&lt;host&gt;
        loop  txqueuelen 1000  (Bucle local)
        RX packets 10539  bytes 3644318 (3.6 MB)
        RX errors 0  dropped 0  overruns 0  frame 0
        TX packets 10539  bytes 3644318 (3.6 MB)
        TX errors 0  dropped 0 overruns 0  carrier 0  collisions 0

wlo1: flags=4163&lt;UP,BROADCAST,RUNNING,MULTICAST&gt;  mtu 1500
        inet 192.168.1.210  netmask 255.255.255.0  broadcast 192.168.1.255
        inet6 fe80::7b37:658e:b290:5d1a  prefixlen 64  scopeid 0x20&lt;link&gt;</pre>
</div>


<!-- nautilus -->
<div class="a win" style="left:426px;top:135.6px;width:467px;height:235px;background:#fefefe;border-radius:6px 6px 0 0">
  <div class="a" style="left:0;top:0;width:65.5px;height:235px;background:#f0f0f0"></div>
  <div class="a" style="left:5px;top:3.5px;font-size:6px;color:#aaa">☐</div>
  <div class="a" style="left:23px;top:3.5px;font-size:5.2px;color:#666">Archivos</div>
  <div class="a" style="left:56px;top:3px;font-size:5px;color:#aaa">⌕</div>
  <div class="a" style="left:2px;top:130.4px;width:61px;height:11px;border-radius:2px;background:#dcdcdc"></div>
  <div class="a" style="left:6px;top:15.8px;width:4px;height:4px;border:0.7px solid #888;border-radius:0.6px"></div><div class="a" style="left:14px;top:15.2px;font-size:5px;color:#5a5a5a;white-space:nowrap">Recientes</div>
<div class="a" style="left:6px;top:26.1px;width:4px;height:4px;border:0.7px solid #888;border-radius:0.6px"></div><div class="a" style="left:14px;top:25.5px;font-size:5px;color:#5a5a5a;white-space:nowrap">Destacados</div>
<div class="a" style="left:6px;top:36.4px;width:4px;height:4px;border:0.7px solid #888;border-radius:0.6px"></div><div class="a" style="left:14px;top:35.8px;font-size:5px;color:#5a5a5a;white-space:nowrap">Carpeta personal</div>
<div class="a" style="left:6px;top:46.7px;width:4px;height:4px;border:0.7px solid #888;border-radius:0.6px"></div><div class="a" style="left:14px;top:46.1px;font-size:5px;color:#5a5a5a;white-space:nowrap">Escritorio</div>
<div class="a" style="left:6px;top:57.0px;width:4px;height:4px;border:0.7px solid #888;border-radius:0.6px"></div><div class="a" style="left:14px;top:56.4px;font-size:5px;color:#5a5a5a;white-space:nowrap">Descargas</div>
<div class="a" style="left:6px;top:67.3px;width:4px;height:4px;border:0.7px solid #888;border-radius:0.6px"></div><div class="a" style="left:14px;top:66.7px;font-size:5px;color:#5a5a5a;white-space:nowrap">Documentos</div>
<div class="a" style="left:6px;top:77.6px;width:4px;height:4px;border:0.7px solid #888;border-radius:0.6px"></div><div class="a" style="left:14px;top:77.0px;font-size:5px;color:#5a5a5a;white-space:nowrap">Imágenes</div>
<div class="a" style="left:6px;top:87.9px;width:4px;height:4px;border:0.7px solid #888;border-radius:0.6px"></div><div class="a" style="left:14px;top:87.3px;font-size:5px;color:#5a5a5a;white-space:nowrap">Música</div>
<div class="a" style="left:6px;top:98.2px;width:4px;height:4px;border:0.7px solid #888;border-radius:0.6px"></div><div class="a" style="left:14px;top:97.6px;font-size:5px;color:#5a5a5a;white-space:nowrap">Vídeos</div>
<div class="a" style="left:6px;top:108.5px;width:4px;height:4px;border:0.7px solid #888;border-radius:0.6px"></div><div class="a" style="left:14px;top:107.9px;font-size:5px;color:#5a5a5a;white-space:nowrap">Papelera</div>
<div class="a" style="left:6px;top:122.6px;width:4px;height:4px;border:0.7px solid #888;border-radius:0.6px"></div><div class="a" style="left:14px;top:122.0px;font-size:5px;color:#5a5a5a;white-space:nowrap">Escritorio</div>
<div class="a" style="left:6px;top:132.9px;width:4px;height:4px;border:0.7px solid #888;border-radius:0.6px"></div><div class="a" style="left:14px;top:132.3px;font-size:5px;color:#5a5a5a;white-space:nowrap">html</div>
<div class="a" style="left:6px;top:143.2px;width:4px;height:4px;border:0.7px solid #888;border-radius:0.6px"></div><div class="a" style="left:14px;top:142.6px;font-size:5px;color:#5a5a5a;white-space:nowrap">dam</div>
<div class="a" style="left:8px;top:156.3px;font-size:5px;color:#555;white-space:nowrap">+&nbsp;&nbsp;Otras ubicaciones</div>

  <div class="a" style="left:154px;top:1.5px;width:215px;height:9px;border-radius:3px;background:#f1f1f1"></div>
  <div class="a" style="left:160px;top:3px;font-size:4.4px;color:#aaa;white-space:nowrap">var&nbsp;&nbsp;&nbsp;www&nbsp;&nbsp;&nbsp;html</div>
  <div class="a" style="left:212px;top:3px;font-size:4.4px;color:#666;white-space:nowrap">/ dam</div>
  <div class="a" style="left:377px;top:3px;font-size:5px;color:#aaa">⧉</div>
  <div class="a" style="left:420px;top:3.5px;font-size:5px;color:#999;white-space:nowrap">☰ ⌄&nbsp;&nbsp;&nbsp;–&nbsp;&nbsp;&nbsp;□&nbsp;&nbsp;&nbsp;✕</div>
  <div class="a" style="left:74px;top:14px;font-size:4px;color:#aaa">Nombre</div>
  <div class="a" style="left:78px;top:21px;width:16px;height:0.7px;background:#ccc"></div>
  <div class="a" style="left:66px;top:22px;width:401px;height:0.6px;background:#eee"></div>
  <div class="a" style="left:404px;top:13px;font-size:4px;color:#aaa">Tamaño</div>
  <div class="a" style="left:437px;top:13px;font-size:4px;color:#aaa">Modificado</div>
  <div class="a" style="left:72px;top:71.4px;width:388px;height:20.6px;background:#f4d0c8"></div>
  <div class="a" style="left:74px;top:34.4px;font-size:4px;color:#999">›</div><div class="a" style="left:78px;top:28.4px;width:16px;height:15px;border-radius:2px;background:#6e2f45"></div><div class="a" style="left:78px;top:30.4px;width:16px;height:13px;border-radius:1px 1px 2px 2px;background:#6b6b6b"></div><div class="a" style="left:98px;top:33.4px;font-size:4.6px;color:#666;white-space:nowrap">solvepointLsa</div><div class="a" style="left:404px;top:33.4px;font-size:4.4px;color:#999;white-space:nowrap">4 elementos</div><div class="a" style="right:9px;top:33.4px;font-size:4.4px;color:#999;white-space:nowrap">11 oct 2024</div>
<div class="a" style="left:74px;top:57.2px;font-size:4px;color:#999">›</div><div class="a" style="left:78px;top:51.2px;width:16px;height:15px;border-radius:2px;background:#6e2f45"></div><div class="a" style="left:78px;top:53.2px;width:16px;height:13px;border-radius:1px 1px 2px 2px;background:#6b6b6b"></div><div class="a" style="left:98px;top:56.2px;font-size:4.6px;color:#666;white-space:nowrap">jroke</div><div class="a" style="left:404px;top:56.2px;font-size:4.4px;color:#999;white-space:nowrap">1 elemento</div><div class="a" style="right:9px;top:56.2px;font-size:4.4px;color:#999;white-space:nowrap">7 jul 2024</div>
<div class="a" style="left:74px;top:79.9px;font-size:4px;color:#999">›</div><div class="a" style="left:78px;top:73.9px;width:16px;height:15px;border-radius:2px;background:#6e2f45"></div><div class="a" style="left:78px;top:75.9px;width:16px;height:13px;border-radius:1px 1px 2px 2px;background:#6b6b6b"></div><div class="a" style="left:98px;top:78.9px;font-size:4.6px;color:#666;white-space:nowrap">proyectoAPR</div><div class="a" style="left:404px;top:78.9px;font-size:4.4px;color:#999;white-space:nowrap">3 elementos</div><div class="a" style="right:9px;top:78.9px;font-size:4.4px;color:#999;white-space:nowrap">23 ago 2024</div>
<div class="a" style="left:80px;top:96.7px;width:12px;height:15px;border-radius:1px;background:#f4f4f4;border:0.5px solid #ddd"></div><div class="a" style="left:81px;top:101.7px;font-size:5px;color:#8fa0c8">&lt;/&gt;</div><div class="a" style="left:98px;top:101.7px;font-size:4.6px;color:#666;white-space:nowrap">geopos.php</div><div class="a" style="left:404px;top:101.7px;font-size:4.4px;color:#999;white-space:nowrap">17 bytes</div><div class="a" style="right:9px;top:101.7px;font-size:4.4px;color:#999;white-space:nowrap">ayer a las 13:08</div>
<div class="a" style="left:80px;top:119.4px;width:12px;height:15px;border-radius:1px;background:#2f9f8a"></div><div class="a" style="left:85.5px;top:120.4px;width:1px;height:5px;background:#fff"></div><div class="a" style="left:98px;top:124.4px;font-size:4.6px;color:#666;white-space:nowrap">wordpress-6.7.1.zip</div><div class="a" style="left:404px;top:124.4px;font-size:4.4px;color:#999;white-space:nowrap">26,4 MB</div><div class="a" style="right:9px;top:124.4px;font-size:4.4px;color:#999;white-space:nowrap">8 dic 2024</div>
<div class="a" style="left:76px;top:145.2px;width:20px;height:10px;background:linear-gradient(90deg,#c9c9c9 0,#c9c9c9 35%,#8d8d8d 35%,#8d8d8d 55%,#b87d86 55%)"></div><div class="a" style="left:98px;top:147.2px;font-size:4.6px;color:#666;white-space:nowrap">sirnsord.org</div><div class="a" style="left:404px;top:147.2px;font-size:4.4px;color:#999;white-space:nowrap">75,7 kB</div><div class="a" style="right:9px;top:147.2px;font-size:4.4px;color:#999;white-space:nowrap">16 nov 2023</div>
<div class="a" style="left:80px;top:164.9px;width:12px;height:15px;border-radius:1px;background:#f4f4f4;border:0.5px solid #ddd"></div><div class="a" style="left:82px;top:167.9px;width:8px;height:9px;border-radius:3px;background:linear-gradient(135deg,#4a78b0 50%,#f0c93a 50%)"></div><div class="a" style="left:98px;top:169.9px;font-size:4.6px;color:#666;white-space:nowrap">plantillaflask.py</div><div class="a" style="left:404px;top:169.9px;font-size:4.4px;color:#999;white-space:nowrap">789 bytes</div><div class="a" style="right:9px;top:169.9px;font-size:4.4px;color:#999;white-space:nowrap">11 nov 2023</div>
<div class="a" style="left:80px;top:187.7px;width:12px;height:15px;border-radius:1px;background:#f2f2f2;border:0.5px solid #ddd"></div><div class="a" style="left:98px;top:192.7px;font-size:4.6px;color:#666;white-space:nowrap">GMT20240912-100333_Recording.transcript.vtt</div><div class="a" style="left:404px;top:192.7px;font-size:4.4px;color:#999;white-space:nowrap">653 bytes</div><div class="a" style="right:9px;top:192.7px;font-size:4.4px;color:#999;white-space:nowrap">16 oct 2024</div>
<div class="a" style="left:80px;top:210.4px;width:12px;height:15px;border-radius:1px;background:#f4f4f4;border:0.5px solid #ddd"></div><div class="a" style="left:81px;top:215.4px;font-size:5px;color:#8fa0c8">&lt;/&gt;</div><div class="a" style="left:98px;top:215.4px;font-size:4.6px;color:#666;white-space:nowrap">index.html</div><div class="a" style="left:404px;top:215.4px;font-size:4.4px;color:#999;white-space:nowrap">4,7 kB</div><div class="a" style="right:9px;top:215.4px;font-size:4.4px;color:#999;white-space:nowrap">16 ago 2024</div>

  <div class="a" style="right:5px;top:229px;font-size:3.8px;color:#666;white-space:nowrap">«proyectoAPR» seleccionado (contiene 3 elementos)</div>
</div>


<!-- zoom -->
<div class="a win" style="left:913.5px;top:202.6px;width:208px;height:168.4px;background:#1358f7;border-radius:5px 5px 0 0">
  <div class="a" style="left:0;top:0;width:208px;height:11.5px;background:#f6f5f4"></div>
  <div class="a" style="left:0;top:2.5px;width:208px;text-align:center;font-size:5px;color:#666">Zoom Workplace</div>
  <div class="a" style="left:181px;top:2px;font-size:5px;color:#888;white-space:nowrap">–&nbsp;&nbsp;&nbsp;□&nbsp;&nbsp;&nbsp;✕</div>
  <div class="a" style="left:0;top:28.8px;width:208px;text-align:center;font-size:12.2px;line-height:14px;font-weight:bold;color:#eef4ff;letter-spacing:0.2px">zoom</div>
  <div class="a" style="left:0;top:41.8px;width:208px;text-align:center;font-size:12.5px;line-height:14px;font-weight:bold;color:#eef4ff;letter-spacing:-0.2px">Workplace</div>
  <div class="a" style="left:53px;top:74.4px;width:101.6px;height:43.5px;border-radius:3px;background:#fdfdfd"></div>
  <div class="a" style="left:62.4px;top:84.5px;width:84px;height:9px;border-radius:2px;background:#ededf0"></div>
  <div class="a" style="left:0;top:86.5px;width:208px;text-align:center;font-size:4px;color:#bbb">Join a meeting</div>
  <div class="a" style="left:62.4px;top:98.9px;width:84px;height:9.5px;border-radius:2.5px;border:0.6px solid #999;background:#fff"></div>
  <div class="a" style="left:0;top:101.3px;width:208px;text-align:center;font-size:4.6px;color:#333">Sign in</div>
  <div class="a" style="left:189px;top:155px;font-size:5px;color:#cfe">▲</div>
</div>


<!-- gedit -->
<div class="a win" style="left:147px;top:399px;width:325px;height:198px;background:#fafafa;border-radius:4px 4px 0 0">
  <div class="a" style="left:0;top:0;width:325px;height:9.5px;background:#f3f3f3"></div>
  <div class="a" style="left:16px;top:2.6px;font-size:3.8px;color:#444;white-space:nowrap">Explorador de archivos&nbsp;&nbsp;&nbsp;⌄</div>
  <div class="a" style="left:68px;top:1.5px;width:36px;height:6.5px;border-radius:1.5px;background:#f9f9f9;border:0.4px solid #ddd"></div>
  <div class="a" style="left:72px;top:2.6px;font-size:3.6px;color:#555">Abrir&nbsp;&nbsp;&nbsp;⌄&nbsp;&nbsp;&nbsp;⧉</div>
  <div class="a" style="left:67.5px;top:1.2px;width:257.5px;text-align:center;font-size:3.8px;color:#444">Nuevo.php</div>
  <div class="a" style="left:67.5px;top:5px;width:257.5px;text-align:center;font-size:3.2px;color:#999;white-space:nowrap">/var/www/html/dam/Segundo/Sistemas de gestión empresarial/Tienda/recursos/js</div>
  <div class="a" style="left:274px;top:3px;font-size:3.6px;color:#777;white-space:nowrap">Guardar</div><div class="a" style="left:291px;top:2.6px;font-size:3.6px;color:#888">⌄</div><div class="a" style="left:310px;top:2.6px;font-size:3.6px;color:#888">–</div><div class="a" style="left:318px;top:2.6px;font-size:3.6px;color:#888">✕</div>
  <div class="a" style="left:0;top:9.5px;width:325px;height:0.5px;background:#e4e4e4"></div>
  <div class="a" style="left:2px;top:11px;font-size:3.4px;color:#aaa">‹&nbsp;&nbsp;›&nbsp;&nbsp;&nbsp;‹</div>
  <div class="a" style="left:16px;top:10.8px;width:50px;height:5px;border-radius:1px;background:#f0f0f0"></div>
  <div class="a" style="left:19px;top:11.5px;font-size:3.4px;color:#666;white-space:nowrap">Crear/editar de la discusi... ⌄</div>
  <div class="a" style="left:67.5px;top:10px;width:257.5px;height:6.5px;background:#f6f6f6"></div>
  <div class="a" style="left:67.5px;top:11px;width:42.6px;text-align:center;font-size:3.4px;color:#999;white-space:nowrap">Nuevo.php</div><div class="a" style="left:110.1px;top:11px;width:42.6px;text-align:center;font-size:3.4px;color:#999;white-space:nowrap">index.php</div><div class="a" style="left:152.7px;top:11px;width:42.6px;text-align:center;font-size:3.4px;color:#999;white-space:nowrap">carrito.php</div><div class="a" style="left:195.3px;top:11px;width:42.6px;text-align:center;font-size:3.4px;color:#999;white-space:nowrap">productos.php</div><div class="a" style="left:237.9px;top:11px;width:42.6px;text-align:center;font-size:3.4px;color:#999;white-space:nowrap">pedidos.php</div><div class="a" style="left:280.5px;top:11px;width:42.6px;text-align:center;font-size:3.4px;color:#999;white-space:nowrap">Nuevo.php</div>
  <div class="a" style="left:280px;top:15.5px;width:42px;height:0.8px;background:#e8a090"></div>
  <div class="a" style="left:0;top:16.5px;width:325px;height:0.4px;background:#e6e6e6"></div>
  <div class="a" style="left:67.5px;top:17px;width:0.5px;height:181px;background:#e0e0e0"></div>
  <div class="a" style="left:68px;top:17px;width:7.5px;height:178px;background:#ededed"></div>
  <div class="a" style="left:75.5px;top:30.7px;width:249.5px;height:6px;background:#ececec"></div>
  <div class="a" style="left:3.0px;top:18.80px;width:3px;height:2.6px;background:#555"></div><div class="a" style="left:7.0px;top:18.00px;font-size:3.6px;line-height:4.5px;color:#444;white-space:nowrap">.git</div>
<div class="a" style="left:3.0px;top:23.68px;width:3px;height:2.6px;background:#555"></div><div class="a" style="left:7.0px;top:22.88px;font-size:3.6px;line-height:4.5px;color:#444;white-space:nowrap">Tienda</div>
<div class="a" style="left:7.0px;top:28.56px;width:3px;height:2.6px;background:#555"></div><div class="a" style="left:11.0px;top:27.76px;font-size:3.6px;line-height:4.5px;color:#444;white-space:nowrap">aplicaciones</div>
<div class="a" style="left:7.0px;top:33.44px;width:3px;height:2.6px;background:#555"></div><div class="a" style="left:11.0px;top:32.64px;font-size:3.6px;line-height:4.5px;color:#444;white-space:nowrap">recursos</div>
<div class="a" style="left:7.0px;top:38.32px;width:3px;height:2.6px;background:#555"></div><div class="a" style="left:11.0px;top:37.52px;font-size:3.6px;line-height:4.5px;color:#444;white-space:nowrap">img</div>
<div class="a" style="left:7.0px;top:43.20px;width:3px;height:2.6px;background:#555"></div><div class="a" style="left:11.0px;top:42.40px;font-size:3.6px;line-height:4.5px;color:#444;white-space:nowrap">js</div>
<div class="a" style="left:0;top:46.98px;width:67.5px;height:4.8px;background:#d8552e"></div><div class="a" style="left:11.0px;top:47.78px;width:2.4px;height:3px;border:0.4px solid #999"></div><div class="a" style="left:15.0px;top:47.28px;font-size:3.6px;line-height:4.5px;color:#fff;white-space:nowrap">Nuevo.php</div>
<div class="a" style="left:11.0px;top:52.66px;width:2.4px;height:3px;border:0.4px solid #999"></div><div class="a" style="left:15.0px;top:52.16px;font-size:3.6px;line-height:4.5px;color:#444;white-space:nowrap">index.php</div>
<div class="a" style="left:11.0px;top:57.54px;width:2.4px;height:3px;border:0.4px solid #999"></div><div class="a" style="left:15.0px;top:57.04px;font-size:3.6px;line-height:4.5px;color:#444;white-space:nowrap">carrito.php</div>
<div class="a" style="left:11.0px;top:62.42px;width:2.4px;height:3px;border:0.4px solid #999"></div><div class="a" style="left:15.0px;top:61.92px;font-size:3.6px;line-height:4.5px;color:#444;white-space:nowrap">productos.php</div>
<div class="a" style="left:11.0px;top:67.30px;width:2.4px;height:3px;border:0.4px solid #999"></div><div class="a" style="left:15.0px;top:66.80px;font-size:3.6px;line-height:4.5px;color:#444;white-space:nowrap">pedidos.php</div>
<div class="a" style="left:11.0px;top:72.18px;width:2.4px;height:3px;border:0.4px solid #999"></div><div class="a" style="left:15.0px;top:71.68px;font-size:3.6px;line-height:4.5px;color:#444;white-space:nowrap">login.php</div>
<div class="a" style="left:7.0px;top:77.36px;width:3px;height:2.6px;background:#555"></div><div class="a" style="left:11.0px;top:76.56px;font-size:3.6px;line-height:4.5px;color:#444;white-space:nowrap">superclase</div>
<div class="a" style="left:7.0px;top:81.94px;width:2.4px;height:3px;border:0.4px solid #999"></div><div class="a" style="left:11.0px;top:81.44px;font-size:3.6px;line-height:4.5px;color:#444;white-space:nowrap">config.php</div>
<div class="a" style="left:7.0px;top:86.82px;width:2.4px;height:3px;border:0.4px solid #999"></div><div class="a" style="left:11.0px;top:86.32px;font-size:3.6px;line-height:4.5px;color:#444;white-space:nowrap">index.php</div>
<div class="a" style="left:7.0px;top:91.70px;width:2.4px;height:3px;border:0.4px solid #999"></div><div class="a" style="left:11.0px;top:91.20px;font-size:3.6px;line-height:4.5px;color:#444;white-space:nowrap">main.txt</div>
<div class="a" style="left:7.0px;top:96.58px;width:2.4px;height:3px;border:0.4px solid #999"></div><div class="a" style="left:11.0px;top:96.08px;font-size:3.6px;line-height:4.5px;color:#444;white-space:nowrap">fallas</div>
<div class="a" style="left:7.0px;top:101.46px;width:2.4px;height:3px;border:0.4px solid #999"></div><div class="a" style="left:11.0px;top:100.96px;font-size:3.6px;line-height:4.5px;color:#444;white-space:nowrap">Nuevo.php</div>
<div class="a" style="left:3.0px;top:106.64px;width:3px;height:2.6px;background:#555"></div><div class="a" style="left:7.0px;top:105.84px;font-size:3.6px;line-height:4.5px;color:#444;white-space:nowrap">Herramientas</div>
<div class="a" style="left:3.0px;top:111.52px;width:3px;height:2.6px;background:#555"></div><div class="a" style="left:7.0px;top:110.72px;font-size:3.6px;line-height:4.5px;color:#444;white-space:nowrap">datos_tienda</div>
<div class="a" style="left:3.0px;top:116.40px;width:3px;height:2.6px;background:#555"></div><div class="a" style="left:7.0px;top:115.60px;font-size:3.6px;line-height:4.5px;color:#444;white-space:nowrap">plantillas</div>
<div class="a" style="left:3.0px;top:121.28px;width:3px;height:2.6px;background:#555"></div><div class="a" style="left:7.0px;top:120.48px;font-size:3.6px;line-height:4.5px;color:#444;white-space:nowrap">ejemplos</div>
<div class="a" style="left:3.0px;top:126.16px;width:3px;height:2.6px;background:#555"></div><div class="a" style="left:7.0px;top:125.36px;font-size:3.6px;line-height:4.5px;color:#444;white-space:nowrap">recursos</div>
<div class="a" style="left:3.0px;top:130.74px;width:2.4px;height:3px;border:0.4px solid #999"></div><div class="a" style="left:7.0px;top:130.24px;font-size:3.6px;line-height:4.5px;color:#444;white-space:nowrap">LICENSE</div>

  <div class="a mono" style="left:68.5px;top:17.5px;font-size:6.4px;line-height:6.5px;color:#333;white-space:pre">1<span style="color:#aaa">▯</span><span style="color:#9b30d9">?php</span>
2
3<span style="color:#666">?</span><span style="color:#aaa">▯</span></div>
  <div class="a" style="left:0;top:195px;width:325px;height:3px;background:#f3f3f3"></div>
  <div class="a" style="left:205px;top:193.4px;font-size:3.2px;color:#888;white-space:nowrap">PHP ⌄&nbsp;&nbsp;&nbsp;&nbsp;&nbsp;&nbsp;Anchura del tabulador: 4 ⌄&nbsp;&nbsp;&nbsp;&nbsp;&nbsp;&nbsp;Ln 3, Col 3&nbsp;&nbsp;&nbsp;&nbsp;&nbsp;&nbsp;&nbsp;INS</div>
</div>


<!-- chrome -->
<div class="a win" style="left:492px;top:392px;width:377px;height:206px;background:#fff;border-radius:4px 4px 0 0">
  <div class="a" style="left:0;top:0;width:377px;height:23px;background:#fbfbfb"></div>
  <div class="a" style="left:0;top:1px;width:377px;text-align:center;font-size:3.1px;color:#aaa">ChatGPT - Chromium</div>
  <div class="a" style="left:355px;top:0.5px;font-size:3.3px;color:#aaa;white-space:nowrap">–&nbsp;&nbsp;&nbsp;✕</div>
  <div class="a" style="left:2px;top:9px;font-size:3.4px;color:#888">⌄</div>
  <div class="a" style="left:8px;top:7.5px;width:46px;height:6.8px;background:#f6f6f6;border:0.4px solid #e2e2e2;border-radius:2px"></div><div class="a" style="left:11px;top:9.7px;width:2.6px;height:2.6px;border-radius:2px;background:#888"></div><div class="a" style="left:15.5px;top:9px;font-size:3.1px;color:#555;white-space:nowrap">Python 3.13</div><div class="a" style="left:49px;top:8.6px;font-size:3.5px;color:#666">×</div><div class="a" style="left:55px;top:7.5px;width:46px;height:6.8px;background:#ffffff;border:0.4px solid #e2e2e2;border-radius:2px"></div><div class="a" style="left:58px;top:9.7px;width:2.6px;height:2.6px;border-radius:2px;background:#888"></div><div class="a" style="left:62.5px;top:9px;font-size:3.1px;color:#555;white-space:nowrap">ChatGPT</div><div class="a" style="left:96px;top:8.6px;font-size:3.5px;color:#666">×</div><div class="a" style="left:102px;top:7.5px;width:46px;height:6.8px;background:#f6f6f6;border:0.4px solid #e2e2e2;border-radius:2px"></div><div class="a" style="left:105px;top:9.7px;width:2.6px;height:2.6px;border-radius:2px;background:#888"></div><div class="a" style="left:109.5px;top:9px;font-size:3.1px;color:#555;white-space:nowrap">localhost/Tienda/aplicac</div><div class="a" style="left:143px;top:8.6px;font-size:3.5px;color:#666">×</div><div class="a" style="left:149px;top:7.5px;width:46px;height:6.8px;background:#f6f6f6;border:0.4px solid #e2e2e2;border-radius:2px"></div><div class="a" style="left:152px;top:9.7px;width:2.6px;height:2.6px;border-radius:2px;background:#888"></div><div class="a" style="left:156.5px;top:9px;font-size:3.1px;color:#555;white-space:nowrap">localhost/Tienda/apl...</div><div class="a" style="left:190px;top:8.6px;font-size:3.5px;color:#666">×</div><div class="a" style="left:196px;top:7.5px;width:46px;height:6.8px;background:#f6f6f6;border:0.4px solid #e2e2e2;border-radius:2px"></div><div class="a" style="left:199px;top:9.7px;width:2.6px;height:2.6px;border-radius:2px;background:#888"></div><div class="a" style="left:203.5px;top:9px;font-size:3.1px;color:#555;white-space:nowrap">localhost/Tienda/ SM de...</div><div class="a" style="left:237px;top:8.6px;font-size:3.5px;color:#666">×</div><div class="a" style="left:243px;top:7.5px;width:46px;height:6.8px;background:#f6f6f6;border:0.4px solid #e2e2e2;border-radius:2px"></div><div class="a" style="left:246px;top:9.7px;width:2.6px;height:2.6px;border-radius:2px;background:#888"></div><div class="a" style="left:250.5px;top:9px;font-size:3.1px;color:#555;white-space:nowrap">acceso.aid.gratis.cabal</div><div class="a" style="left:284px;top:8.6px;font-size:3.5px;color:#666">×</div>
  <div class="a" style="left:0;top:22.6px;width:377px;height:0.5px;background:#e6e6e6"></div>
  <div class="a" style="left:4px;top:17px;font-size:3.6px;color:#777;white-space:nowrap">←&nbsp;&nbsp;&nbsp;→&nbsp;&nbsp;&nbsp;↻&nbsp;&nbsp;&nbsp;⚲</div>
  <div class="a" style="left:35px;top:17.3px;font-size:3.3px;color:#555;white-space:nowrap">chatgpt.com/c/6757a2e4-8f1c-800c-a0fb-c50d62f9d4b8</div>
  <div class="a" style="left:338px;top:17px;font-size:3.6px;color:#666;white-space:nowrap">⚲&nbsp;&nbsp;☆&nbsp;&nbsp;&nbsp;⧉&nbsp;&nbsp;&nbsp;◉&nbsp;&nbsp;⋮</div>
  <div class="a" style="left:0;top:23px;width:54px;height:183px;background:#f9f9f9"></div>
  <div class="a" style="left:5px;top:29.0px;width:4px;height:4px;border:0.5px solid #555;border-radius:1px"></div>
  <div class="a" style="left:44px;top:28.1px;font-size:4.2px;color:#555">⚲&nbsp;⧄</div>
  <div class="a" style="left:5px;top:38.0px;width:4px;height:4px;border-radius:2px;background:#333"></div><div class="a" style="left:12px;top:38.0px;font-size:3.4px;color:#333;white-space:nowrap">ChatGPT</div><div class="a" style="left:5px;top:45.8px;width:4px;height:4px;border-radius:2px;background:#3aa55d"></div><div class="a" style="left:12px;top:45.8px;font-size:3.4px;color:#333;white-space:nowrap">Sora</div><div class="a" style="left:5px;top:53.6px;width:4px;height:4px;border-radius:2px;background:#c0392b"></div><div class="a" style="left:12px;top:53.6px;font-size:3.4px;color:#333;white-space:nowrap">Video Generator</div><div class="a" style="left:5px;top:61.4px;width:4px;height:4px;border-radius:2px;background:#777"></div><div class="a" style="left:12px;top:61.4px;font-size:3.4px;color:#333;white-space:nowrap">Explore GPTs</div><div class="a" style="left:1px;top:80.1px;width:53px;height:6px;border-radius:1.5px;background:#ececec"></div><div class="a" style="left:4px;top:81.1px;font-size:3.2px;color:#444;white-space:nowrap">Check de la LLT</div><div class="a" style="left:4px;top:88.9px;font-size:3.2px;color:#444;white-space:nowrap">Check of "Quan.dnd"</div><div class="a" style="left:4px;top:96.7px;font-size:3.2px;color:#444;white-space:nowrap">PHP fechas Consulta</div><div class="a" style="left:4px;top:104.4px;font-size:3.2px;color:#444;white-space:nowrap">Convertir variables a csv.md</div><div class="a" style="left:4px;top:112.2px;font-size:3.2px;color:#444;white-space:nowrap">Cierre de esquemas HTML</div><div class="a" style="left:4px;top:120.0px;font-size:3.2px;color:#444;white-space:nowrap">Crear sistema con pruebas Webs</div><div class="a" style="left:4px;top:127.8px;font-size:3.2px;color:#444;white-space:nowrap">Reemplazar datos identificación</div><div class="a" style="left:4px;top:135.6px;font-size:3.2px;color:#444;white-space:nowrap">Python Empalar los imágenes</div><div class="a" style="left:4px;top:143.3px;font-size:3.2px;color:#444;white-space:nowrap">Consultar estados de datos</div><div class="a" style="left:4px;top:151.1px;font-size:3.2px;color:#444;white-space:nowrap">Publicación IDE Problema</div><div class="a" style="left:4px;top:158.9px;font-size:3.2px;color:#444;white-space:nowrap">Git y código global</div><div class="a" style="left:4px;top:166.7px;font-size:3.2px;color:#444;white-space:nowrap">Viewer automatic responses ch</div><div class="a" style="left:4px;top:174.5px;font-size:3.2px;color:#444;white-space:nowrap">Estado de PHP</div><div class="a" style="left:4px;top:182.3px;font-size:3.2px;color:#444;white-space:nowrap">Adopción página a vender</div><div class="a" style="left:4px;top:193.7px;font-size:3.4px;color:#444;white-space:nowrap">◍&nbsp;&nbsp;Ver los planes</div>
  <div class="a" style="left:4px;top:73.9px;font-size:3px;color:#999">Hoy</div>
  <div class="a" style="left:61.2px;top:27.5px;font-size:4.2px;color:#444;white-space:nowrap">ChatGPT 4o ⌄</div>
  <div class="a" style="left:336.9px;top:28.0px;font-size:3.4px;color:#444;white-space:nowrap">⤴ Compartir</div>
  <div class="a" style="left:363.4px;top:27.5px;width:6px;height:6px;border-radius:3px;background:#5ba0e0"></div>
  <div class="a" style="left:144.7px;top:38.4px;width:153.1px;height:139.1px;background:#fafafa"></div>
  <div class="a" style="left:280.6px;top:39.0px;font-size:3px;color:#aaa">✓ Copiar</div>
  <pre class="a mono" style="left:161.8px;top:36.2px;font-size:3.1px;line-height:5.19px;color:#555;white-space:pre;width:136px;overflow:hidden">$found = false;

<span style="color:#aaa">// Buscar PHP: ficha, tipo de IVA</span>
while ($fila = fgetcsv($file)) !== false) {
    <span style="color:#aaa">// Procesar encabezados para eliminar espacios</span>
    $referencia = trim($fila[0]);

    <span style="color:#aaa">// Verificar si coincide</span>
    if ($referencia === $searchTerm) {
        $found = true;
        break;
    }
}

<span style="color:#aaa">// Cerrar archivo</span>
fclose($file);

<span style="color:#aaa">// Si se ha encontrado la referencia</span>
if ($found) {
    $contenido = "Nuevo valor";
    if (file_put_contents($filePath, "IP detectado: $searchTerm") !== false) {
        echo "Datos IP ($searchTerm) se ha añadido correctamente";
    } else {
        echo "Error IP ($searchTerm) no se han podido guardar los datos";
    }
} else {
    echo "Error IP ($searchTerm) no se ha encontrado";
}</pre>
  <div class="a" style="left:141.5px;top:180.0px;width:157.8px;height:19.4px;border-radius:4px;background:#f4f4f4"></div>
  <div class="a" style="left:143.1px;top:181.2px;font-size:3.2px;color:#888">Envía un mensaje a ChatGPT</div>
  <div class="a" style="left:142.5px;top:191.8px;font-size:4px;color:#555">⌀&nbsp;&nbsp;◍</div>
  <div class="a" style="left:290.6px;top:191.2px;width:6.5px;height:6.5px;border-radius:4px;background:#111"></div>
  <div class="a" style="left:292.6px;top:193.2px;width:2.5px;height:2.5px;border-radius:2px;background:#fff"></div>
  <div class="a" style="left:5.6px;top:200.9px;width:35px;height:0.6px;background:#e88"></div>
</div>


<!-- text editor -->
<div class="a win" style="left:886.5px;top:404.5px;width:248.5px;height:195.5px;background:#fafafa;border-radius:5px 5px 0 0">
  <div class="a" style="left:0;top:0;width:248.5px;height:7px;background:#f4f4f4"></div>
  <div class="a" style="left:4px;top:1.3px;font-size:3px;color:#999;white-space:nowrap">Abrir ⌄&nbsp;&nbsp;&nbsp;&nbsp;⧉</div>
  <div class="a" style="left:0;top:1.3px;width:248.5px;text-align:center;font-size:3px;color:#888">ataques.txt</div>
  <div class="a" style="left:206px;top:1.3px;font-size:3px;color:#999;white-space:nowrap">☰&nbsp;&nbsp;&nbsp;–&nbsp;&nbsp;□&nbsp;&nbsp;✕</div>
  <div class="a mono" style="left:7.5px;top:13.6px;font-size:11.2px;line-height:15.22px;color:#c4c4c4;white-space:pre">1


2
3


4
5</div>
  <div class="a mono" style="left:15.8px;top:13.6px;font-size:11.2px;line-height:15.22px;color:#4a4a4a;letter-spacing:-0.92px;white-space:pre">1.-En el caso de detección de ataque
global: bloqueo completo de aplicación,
"cuanto antes mejor"

2.-En el caso de detección de un ataque
focalizado en una ip concreta: bloqueo
por IP

3.-En el caso de una sola petición
sospechosa, detección de la ejecución
en ese hilo</div>
</div>

<!-- app icons -->
<svg class="a" style="left:262px;top:347px" width="39" height="31" viewBox="0 0 39 31">
 <defs><linearGradient id="tg" x1="0" y1="0" x2="0" y2="1"><stop offset="0" stop-color="#5c5c5c"/><stop offset="1" stop-color="#4e4e4e"/></linearGradient></defs>
 <rect x="0.8" y="0.8" width="37.2" height="29.2" rx="3.5" fill="url(#tg)"/>
 <path d="M6.5 5.2 L12.2 8.1 L6.5 11" stroke="#f2f2f2" stroke-width="1.7" fill="none" stroke-linejoin="round" stroke-linecap="round"/>
 <rect x="12.4" y="13.1" width="6.8" height="1.5" fill="#f2f2f2"/>
</svg>
<svg class="a" style="left:640px;top:345px" width="39" height="36" viewBox="0 0 39 36">
 <defs><linearGradient id="fg" x1="0" y1="0" x2="0" y2="1"><stop offset="0" stop-color="#b6b4b5"/><stop offset="1" stop-color="#a4a2a3"/></linearGradient>
 <linearGradient id="fr" x1="0" y1="0" x2="1" y2="0"><stop offset="0" stop-color="#7a1a40"/><stop offset="1" stop-color="#b03a35"/></linearGradient></defs>
 <path d="M0.5 3 Q0.5 0.5 3 0.5 L14.5 0.5 Q16 0.5 17 2 L18 3.2 L35.5 3.2 Q38 3.2 38 5.5 L38 12 L0.5 12 Z" fill="url(#fr)"/>
 <rect x="0.5" y="6.5" width="37.5" height="28.5" rx="2.5" fill="url(#fg)"/>
 <rect x="13" y="13" width="12" height="2.2" rx="1" fill="#fafafa"/>
</svg>
<svg class="a" style="left:996px;top:340px" width="43" height="44" viewBox="0 0 43 44">
 <defs><linearGradient id="zg" x1="0" y1="0" x2="0" y2="1"><stop offset="0" stop-color="#3a7af3"/><stop offset="0.5" stop-color="#2462ec"/><stop offset="1" stop-color="#1a4fd6"/></linearGradient></defs>
 <path d="M21.5 1.5 C34 1.5 41.5 9 41.5 22 C41.5 35 34 42.5 21.5 42.5 C9 42.5 1.5 35 1.5 22 C1.5 9 9 1.5 21.5 1.5 Z" fill="url(#zg)"/>
 <text x="21.5" y="25.8" text-anchor="middle" font-family="Liberation Sans" font-weight="bold" font-size="10.5" fill="#f4f8ff" letter-spacing="0">zoom</text>
</svg>
<svg class="a" style="left:293px;top:569px" width="33" height="39" viewBox="0 0 33 39">
 <rect x="1" y="0.5" width="31" height="38" rx="3" fill="#fbfbfb" stroke="#d8d8d8" stroke-width="0.8"/>
 <g stroke="#b8b8b8" stroke-width="1"><path d="M4 6 H12 M4 9 H26 M4 12 H16 M4 15 H14 M4 19 H12 M4 22 H10 M4 25 H26 M4 28 H24 M4 31 H14"/></g>
 <path d="M8 32 L24 16 L28 20 L12 36 Z" fill="#3f63d0"/>
 <path d="M24 16 L28 20 L27 21 L23 17 Z" fill="#2a47a8"/>
 <path d="M8 32 L12 36 L5 35.5 Z" fill="#f0d7b0"/>
 <path d="M5 35.5 L7 33.8 L6.5 35.8 Z" fill="#333"/>
</svg>
<svg class="a" style="left:658px;top:567px" width="44" height="44" viewBox="0 0 44 44">
 <circle cx="22" cy="22" r="21.3" fill="#6d9cec"/>
 <path d="M22 11 L40.24 11 A21.3 21.3 0 0 0 3.35 11.7 L12.47 27.5 Z" fill="#2b6bd9"/>
 <path d="M22 11 L40.24 11 A21.3 21.3 0 0 1 22.41 43.3 L31.53 27.5 Z" fill="#abc6f6"/>
 <circle cx="22" cy="22" r="10.8" fill="#e6f3ff"/>
 <circle cx="22" cy="22" r="8.7" fill="#2b72e2"/>
</svg>
<svg class="a" style="left:994px;top:571px" width="38" height="40" viewBox="0 0 38 40">
 <rect x="1.5" y="1" width="31" height="38" rx="3" fill="#f8f8f8" stroke="#dcdcdc" stroke-width="0.6"/>
 <path d="M1.5 4 Q1.5 1 4.5 1 L29.5 1 Q32.5 1 32.5 4 L32.5 8.5 L1.5 8.5 Z" fill="#3b7be0"/>
 <g stroke="#a0a0a0" stroke-width="0.9"><path d="M6 15 H20 M6 18 H22 M6 21 H17 M6 24 H18 M6 28 H16 M6 31 H12 M17 33 H26"/></g>
 <path d="M14 33 L31 16 L35 20 L18 37 Z" fill="#f2cf3a"/>
 <path d="M31 16 L33.5 13.5 L37.5 17.5 L35 20 Z" fill="#e04a5a"/>
 <path d="M14 33 L18 37 L12.5 38 Z" fill="#f3e2c0"/>
</svg>
<!-- cursor -->
<svg class="a" style="left:897px;top:427px" width="8" height="12" viewBox="0 0 8 12"><path d="M1 1 L1 10 L3.3 8 L5 11.3 L6.3 10.6 L4.7 7.4 L7.4 7.4 Z" fill="#222" stroke="#eee" stroke-width="0.6"/></svg>

<!-- close button -->
<div class="a" style="left:1122px;top:392px;width:26px;height:26px;border-radius:13px;background:#303030"></div>
<svg class="a" style="left:1122px;top:392px" width="26" height="26" viewBox="0 0 26 26"><path d="M9.2 9.2 L16.9 16.9 M16.9 9.2 L9.2 16.9" stroke="#ececec" stroke-width="1.5" stroke-linecap="round"/></svg>
<!-- tooltip -->
<div class="a" style="left:903.5px;top:617.5px;width:215px;height:21px;border-radius:11px;background:#1e1e1e;border:1px solid #2c2c2c"></div>
<div class="a" style="left:911.8px;top:621px;font-size:11px;color:#e8e8e8;letter-spacing:-0.41px;white-space:nowrap">ataques.txt (~/Documentos) - Editor de texto</div>

<!-- dock -->
<div id="dock" class="a"></div>
<svg class="a" style="left:0;top:687px" width="400" height="33" viewBox="0 687 400 33">
 <!-- files -->
 <path d="M8.6 697 Q8.6 694.6 11 694.6 L15.5 694.6 L17 696.5 L27 696.5 Q28.9 696.5 28.9 698.5 L28.9 701 L8.6 701 Z" fill="#8a3a60"/>
 <rect x="8.6" y="698.9" width="20.3" height="13.7" rx="1.6" fill="#b8b6b7"/>
 <rect x="15.6" y="701.8" width="5.6" height="1.2" rx="0.5" fill="#f5f5f5"/>
 <circle cx="25.5" cy="696.5" r="6.3" fill="#2bb33b"/>
 <path d="M24.8 693.6 L25.9 693.1 L25.9 699.8" stroke="#f4fff4" stroke-width="1.1" fill="none"/>
 <!-- app center -->
 <rect x="42.8" y="693.8" width="15.8" height="18.8" rx="1.8" fill="#e5602c"/>
 <path d="M47.3 694.5 Q50.7 699.5 54.1 694.5" stroke="#f9d9c8" stroke-width="0.9" fill="none"/>
 <path d="M46 710.5 L50.7 699.5 L55.4 710.5 M47.6 706.5 H53.8 M44.7 709.5 H56.7" stroke="#fae6da" stroke-width="1.3" fill="none"/>
 <!-- help -->
 <circle cx="82.4" cy="703.2" r="9.5" fill="#3b93d6"/>
 <path d="M79.6 700.5 Q79.8 697.3 82.8 697.3 Q85.8 697.5 85.6 700.2 Q85.4 702.3 83 703.2 L82.6 705.5" stroke="#f2f8ff" stroke-width="1.5" fill="none" stroke-linecap="round"/>
 <circle cx="82.6" cy="708.6" r="1" fill="#f2f8ff"/>
 <!-- disk usage -->
 <circle cx="114.5" cy="703.2" r="9.5" fill="#ec6a7c"/>
 <path d="M114.5 703.2 L119.5 695.1 A9.5 9.5 0 0 1 123.6 706 Z" fill="#8aa2ea"/>
 <path d="M114.5 703.2 L123.6 706 A9.5 9.5 0 0 1 113 712.6 Z" fill="#c8dc40"/>
 <path d="M114.5 703.2 L118.5 711.8 A9.5 9.5 0 0 1 113 712.6 Z" fill="#7ed04a"/>
 <!-- sysmon -->
 <rect x="137.5" y="695" width="18.4" height="16.4" rx="1.8" fill="#454545"/>
 <path d="M137.5 704.3 H140.8 L142.2 699.8 L144.6 707.5 L145.6 704.5 L146.8 705.3 L147.6 704.3 H155.9" stroke="#d8d8d8" stroke-width="0.8" fill="none"/>
 <!-- chromium -->
 <g transform="translate(178.5 702.8) scale(0.49) translate(-22 -22)">
  <circle cx="22" cy="22" r="21.3" fill="#6d9cec"/>
  <path d="M22 11 L40.24 11 A21.3 21.3 0 0 0 3.35 11.7 L12.47 27.5 Z" fill="#2b6bd9"/>
  <path d="M22 11 L40.24 11 A21.3 21.3 0 0 1 22.41 43.3 L31.53 27.5 Z" fill="#abc6f6"/>
  <circle cx="22" cy="22" r="11" fill="#e6f3ff"/>
  <circle cx="22" cy="22" r="8.5" fill="#2b72e2"/>
 </g>
 <rect x="194.8" y="693" width="0.9" height="20.3" fill="#3d3d3d"/>
 <!-- text editor -->
 <rect x="204.4" y="693.4" width="16.8" height="19.6" rx="1.8" fill="#f6f6f6"/>
 <path d="M204.4 695.2 Q204.4 693.4 206.2 693.4 L219.4 693.4 Q221.2 693.4 221.2 695.2 L221.2 697.2 L204.4 697.2 Z" fill="#4a8ad8"/>
 <path d="M210 708 L219 699 L221 701 L212 710 Z" fill="#efcf4a"/>
 <path d="M219 699 L220.5 697.5 L222.5 699.5 L221 701 Z" fill="#e06070"/>
 <g stroke="#c0c0c0" stroke-width="0.5"><path d="M206.5 700 H213 M206.5 702 H212 M206.5 704 H211"/></g>
 <!-- zoom -->
 <path d="M244.6 692.7 C251.5 692.7 255.1 696.3 255.1 703.2 C255.1 710.1 251.5 713.7 244.6 713.7 C237.7 713.7 234.1 710.1 234.1 703.2 C234.1 696.3 237.7 692.7 244.6 692.7 Z" fill="#2160ea"/>
 <text x="244.6" y="705.4" text-anchor="middle" font-family="Liberation Sans" font-weight="bold" font-size="5.6" fill="#e8f0ff" letter-spacing="-0.15">zoom</text>
 <!-- obs -->
 <circle cx="276.6" cy="703.2" r="10.3" fill="#262626" stroke="#e0e0e0" stroke-width="0.9"/>
 <g fill="none" stroke="#d0d0d0" stroke-width="1.5">
  <path d="M272.5 696.5 Q271 701 276.6 703.2"/>
  <path d="M283.5 701 Q280 699.5 276.6 703.2"/>
  <path d="M275.5 710.5 Q279.5 707.5 276.6 703.2"/>
 </g>
 <!-- gedit -->
 <rect x="301" y="693.8" width="16" height="19.2" rx="1.8" fill="#f6f6f6"/>
 <path d="M303.5 710 L313 700.5 L315.3 702.8 L305.8 712.3 Z" fill="#3a60c8"/>
 <path d="M303.5 710 L305.8 712.3 L302.5 712.8 Z" fill="#e8c8a0"/>
 <g stroke="#d0d0d0" stroke-width="0.5"><path d="M303 697 H314 M303 699 H310 M303 703 H308 M303 706 H306"/></g>
 <!-- terminal -->
 <rect x="331.4" y="695" width="18.8" height="16.4" rx="1.8" fill="#4c4c4c"/>
 <path d="M333.8 697.3 L336.3 698.6 L333.8 699.9" stroke="#eeeeee" stroke-width="0.9" fill="none"/>
 <rect x="336.8" y="701" width="3" height="0.8" fill="#eee"/>
 <!-- trash -->
 <rect x="364.6" y="693.8" width="16.4" height="19.2" rx="1.8" fill="#d6d6d6"/>
 <rect x="366.5" y="695" width="12.5" height="2" rx="0.5" fill="#f0f0f0"/>
 <circle cx="372.8" cy="704.5" r="3.6" fill="none" stroke="#3aa040" stroke-width="1.6" stroke-dasharray="5 2.5"/>
 <!-- running dots -->
 <g fill="#e0603a">
  <circle cx="18.6" cy="716.5" r="1.2" fill="#b04a6a"/>
  <circle cx="178.5" cy="716.5" r="1.2"/>
  <circle cx="212.6" cy="716.5" r="1.2"/>
  <circle cx="240.7" cy="716.5" r="1.2"/><circle cx="244.6" cy="716.5" r="1.2"/><circle cx="248.75" cy="716.5" r="1.2"/>
  <circle cx="276.6" cy="716.5" r="1.2"/>
  <circle cx="308.6" cy="716.5" r="1.2"/>
  <circle cx="340.6" cy="716.5" r="1.2"/>
 </g>
</svg>
<svg class="a" style="left:1245px;top:687px" width="35" height="33" viewBox="1245 687 35 33">
 <circle cx="1261" cy="703.5" r="6.3" fill="none" stroke="#f0f0f0" stroke-width="1.3"/>
 <circle cx="1255.3" cy="703.4" r="2.9" fill="#141414"/><circle cx="1264.8" cy="698.3" r="2.9" fill="#141414"/><circle cx="1264.3" cy="709" r="2.9" fill="#141414"/>
 <circle cx="1255.3" cy="703.4" r="2.1" fill="#f4f4f4"/><circle cx="1264.8" cy="698.3" r="2.1" fill="#f4f4f4"/><circle cx="1264.3" cy="709" r="2.1" fill="#f4f4f4"/>
</svg>
<!-- tray -->
<svg class="a" style="left:1110px;top:0" width="170" height="21" viewBox="1110 0 170 21">
 <circle cx="1123.2" cy="10.5" r="5.3" fill="#1a1a1a" stroke="#cfcfcf" stroke-width="0.8"/>
 <path d="M1121 7 Q1123.5 8.5 1123.2 10.5 M1126.8 10 Q1124.5 9.8 1123.2 10.5 M1122 14 Q1123.8 12 1123.2 10.5" stroke="#cfcfcf" stroke-width="0.9" fill="none"/>
 <circle cx="1120.3" cy="13.5" r="2" fill="#d02020"/>
 <circle cx="1155.3" cy="10.5" r="5.8" fill="#2a5ed8"/>
 <text x="1155.3" y="12" text-anchor="middle" font-family="Liberation Sans" font-weight="bold" font-size="3.6" fill="#dfe8ff">zm</text>
 <rect x="1183.6" y="6" width="2.8" height="6" rx="1.4" fill="#e05a30"/>
 <path d="M1182.6 10.5 Q1185 14.5 1187.4 10.5 M1185 13.3 V15.3" stroke="#e05a30" stroke-width="0.8" fill="none"/>
 <path d="M1188.4 8 Q1189.6 10.5 1188.4 13" stroke="#7a5040" stroke-width="0.6" fill="none"/>
 <path d="M1200.5 8.3 Q1205.8 4 1211.1 8.3 L1205.8 14.2 Z" fill="#f4f4f4"/>
 <path d="M1219.5 9 H1221.3 L1223.8 6.8 V14.2 L1221.3 12 H1219.5 Z" fill="#f0f0f0"/>
 <path d="M1225.3 8.6 Q1226.3 10.5 1225.3 12.4 M1226.8 7.3 Q1228.5 10.5 1226.8 13.7" stroke="#e0e0e0" stroke-width="0.7" fill="none"/>
 <rect x="1240.5" y="6.2" width="5" height="9" rx="1" fill="none" stroke="#e8e8e8" stroke-width="0.8"/>
 <rect x="1242" y="5.2" width="2" height="1.2" fill="#e8e8e8"/>
 <rect x="1241.3" y="11.2" width="3.4" height="3.3" fill="#e8e8e8"/>
</svg>
<div class="a" style="left:1251.5px;top:4.5px;font-size:9.6px;color:#eeeeee;letter-spacing:-0.35px;white-space:nowrap">49 %</div>
</body></html>
